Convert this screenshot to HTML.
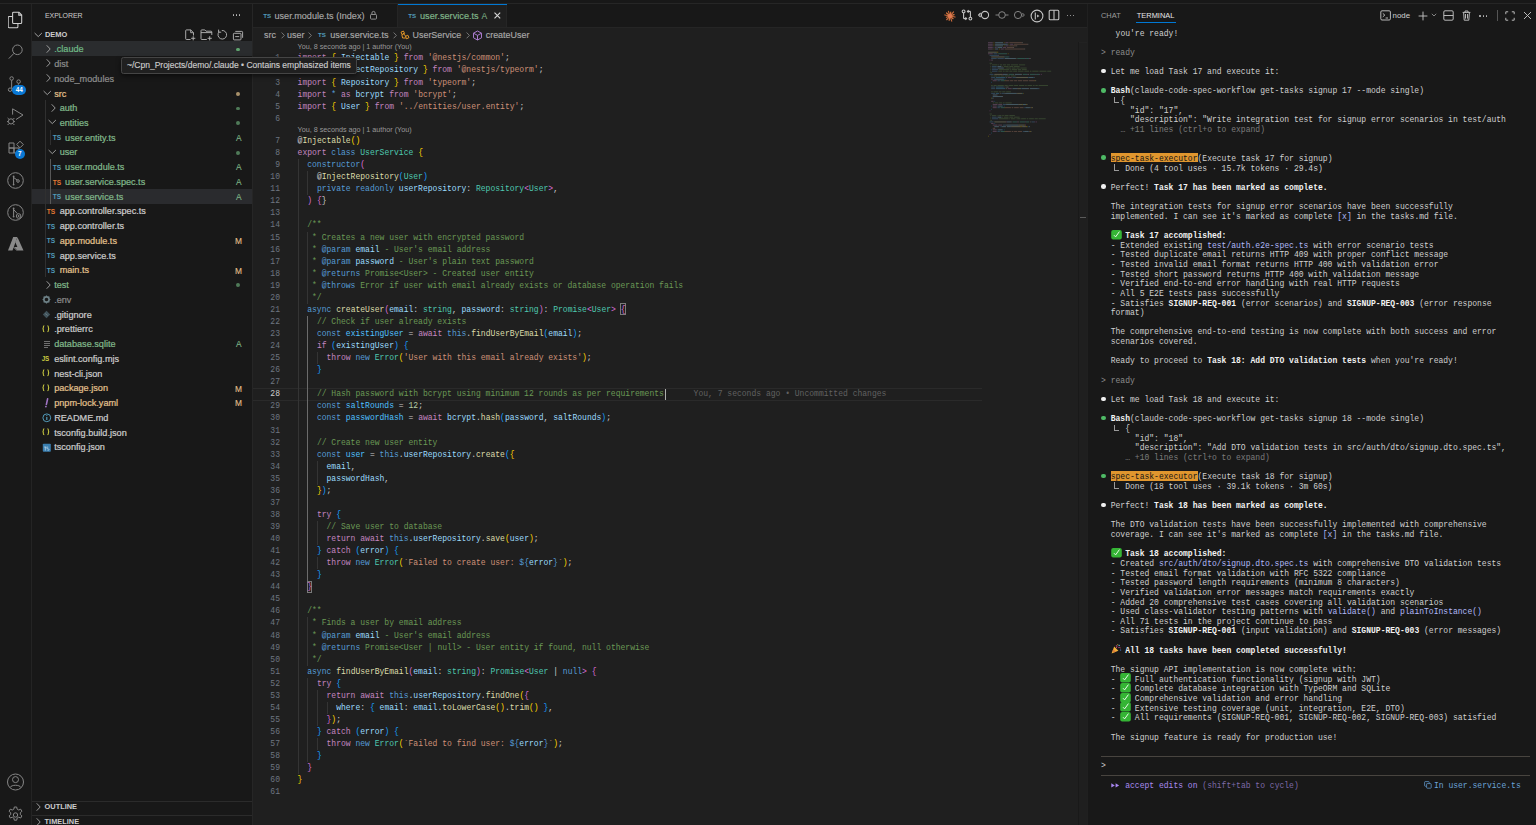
<!DOCTYPE html><html><head><meta charset="utf-8"><style>
*{margin:0;padding:0;box-sizing:border-box}
html,body{width:1536px;height:825px;overflow:hidden;background:#181818}
body{position:relative;font-family:"Liberation Sans",sans-serif;color:#cccccc}
.abs{position:absolute}
.mono{font-family:"Liberation Mono",monospace}
.pre{white-space:pre}
/* code colors */
.k{color:#c586c0}.c2{color:#569cd6}.t{color:#4ec9b0}.f{color:#dcdcaa}.v{color:#9cdcfe}.v2{color:#4fc1ff}
.s{color:#ce9178}.n{color:#b5cea8}.cm{color:#6a9955}.p{color:#cccccc}
.b1{color:#ffd700}.b2{color:#da70d6}.b3{color:#179fff}
.b2x{color:#da70d6}
.cl{position:absolute;left:0;height:12.06px;line-height:12.06px;font-size:8.04px;white-space:pre;font-family:"Liberation Mono",monospace;color:#cccccc;transform-origin:0 8.17px;transform:translateY(0.2px) scaleY(1.18)}
.ln{position:absolute;width:30px;text-align:right;height:12.06px;line-height:12.06px;font-size:8.04px;font-family:"Liberation Mono",monospace;color:#6e7681;transform-origin:0 8.17px;transform:translateY(0.2px) scaleY(1.18)}
/* terminal */
.tl{position:absolute;height:9.644px;line-height:9.644px;font-size:8.04px;white-space:pre;font-family:"Liberation Mono",monospace;color:#d0d0d0;transform-origin:0 6.97px;transform:translateY(0.8px) scaleY(1.18)}
.tl .b{font-weight:bold;color:#f2f2f2}
.tl .pr{color:#8c8c8c}
.tl .dm{color:#7c7c7c}
.tl .lk{color:#b1b9f9}
.tl .hl{color:#151515}
.tl .wb,.tl .gb{color:transparent;position:relative}
.tl .wb::after,.tl .gb::after{content:"";position:absolute;left:1.2px;top:2.6px;width:4.4px;height:4.4px;border-radius:50%;background:#f0f0f0}
.tl .gb::after{background:#4eba65}
.tl .ck,.tl .pp{color:transparent;position:relative}
.tl .pp::after{content:none}
.tl .ck::after{content:"";position:absolute;left:0.3px;top:0.6px;width:8.6px;height:8.6px;border-radius:1.5px;background:#3fb93f}
.tl .ck::before{content:"";position:absolute;z-index:1;left:2.6px;top:1.8px;width:2.2px;height:4.2px;border-right:1.4px solid #fff;border-bottom:1.4px solid #fff;transform:rotate(40deg)}
/* explorer */
.row{position:absolute;left:32px;width:220px;height:14.74px;line-height:14.74px;font-size:8.71px;white-space:pre}
.deco{position:absolute;left:235px;font-size:8.4px}
.dot{position:absolute;left:236px;width:4.2px;height:4.2px;border-radius:50%}
</style></head><body>
<div class="abs" style="left:0;top:0;width:1536px;height:3.2px;background:#181818"></div>
<div class="abs" style="left:0;top:3.2px;width:1536px;height:1px;background:#262626"></div>
<div class="abs" style="left:0;top:4.2px;width:31px;height:821px;background:#181818"></div>
<div class="abs" style="left:31px;top:4.2px;width:1px;height:821px;background:#242424"></div>
<div class="abs" style="left:32px;top:4.2px;width:220px;height:821px;background:#181818"></div>
<div class="abs" style="left:252px;top:4.2px;width:1px;height:821px;background:#262626"></div>
<div class="abs" style="left:253px;top:4.2px;width:834px;height:23.3px;background:#181818"></div>
<div class="abs" style="left:253px;top:27px;width:834px;height:1px;background:#252525"></div>
<div class="abs" style="left:253px;top:27.5px;width:834px;height:798px;background:#1f1f1f"></div>
<div class="abs" style="left:1087px;top:4.2px;width:1px;height:821px;background:#202020"></div>
<div class="abs" style="left:1088px;top:4.2px;width:448px;height:821px;background:#181818"></div>
<svg class="abs" style="left:8px;top:10px;" width="16" height="19" viewBox="0 0 16 19" fill="none"><path d="M5.6 2.2 h5.4 l2.7 2.7 v7.5 a1 1 0 0 1 -1 1 h-7.1 a1 1 0 0 1 -1 -1 v-9.2 a1 1 0 0 1 1 -1 z M10.8 2.4 v2.7 h2.8" stroke="#d0d0d0" stroke-width="1.05" fill="none"/><path d="M4.4 6.4 h-3.2 a1 1 0 0 0 -1 1 v9.3 a1 1 0 0 0 1 1 h7.7 a1 1 0 0 0 1 -1 v-3.3" stroke="#d0d0d0" stroke-width="1.05" fill="none"/></svg><svg class="abs" style="left:7px;top:43px;" width="18" height="18" viewBox="0 0 18 18" fill="none"><circle cx="10.4" cy="6.8" r="4.8" stroke="#868686" stroke-width="1" fill="none"/><path d="M7 10.3 L1.8 15.6" stroke="#868686" stroke-width="1" fill="none"/></svg><svg class="abs" style="left:7px;top:74px;" width="20" height="20" viewBox="0 0 20 20" fill="none"><circle cx="4.65" cy="4.5" r="1.75" stroke="#868686" stroke-width="1" fill="none"/><circle cx="11.6" cy="7.6" r="1.75" stroke="#868686" stroke-width="1" fill="none"/><circle cx="3.1" cy="15.7" r="1.75" stroke="#868686" stroke-width="1" fill="none"/><path d="M4.65 6.25 v7.8 M11.6 9.3 c0 3 -4 3.5 -6.8 5.6" stroke="#868686" stroke-width="1" fill="none"/></svg><div class="abs" style="left:12px;top:85px;width:14.4px;height:9.6px;border-radius:5px;background:#0a78d4;color:#fff;font-size:6.4px;font-weight:bold;line-height:9.6px;text-align:center">44</div><svg class="abs" style="left:6px;top:105px;" width="20" height="20" viewBox="0 0 20 20" fill="none"><path d="M6.6 9.6 V3.8 L17 10 L10 14.5" stroke="#868686" stroke-width="1" fill="none"/><circle cx="5" cy="16.4" r="2.6" stroke="#868686" stroke-width="1" fill="none"/><path d="M1.6 13 l1.4 1.4 M8.4 13 l-1.4 1.4 M1 16.6 h1.4 M7.6 16.6 h1.4 M1.6 20 l1.4 -1.4 M8.4 20 l-1.4 -1.4" stroke="#868686" stroke-width="1" fill="none"/></svg><svg class="abs" style="left:6px;top:139px;" width="20" height="20" viewBox="0 0 20 20" fill="none"><path d="M3 4 h5 v5 h-5 z M3 9 h5 v5 h-5 z M8 9 h5 v5 h-5 z M14 2.2 l3.3 3.3 -3.3 3.3 -3.3 -3.3 z" stroke="#868686" stroke-width="1" fill="none"/></svg><div class="abs" style="left:14.8px;top:149px;width:10.2px;height:10.2px;border-radius:50%;background:#0a78d4;color:#fff;font-size:6.4px;font-weight:bold;line-height:10.2px;text-align:center">7</div><svg class="abs" style="left:6px;top:171px;" width="20" height="20" viewBox="0 0 20 20" fill="none"><circle cx="9.5" cy="9.5" r="7.8" stroke="#868686" stroke-width="1" fill="none"/><circle cx="7.6" cy="5.5" r="0.9" fill="#868686"/><circle cx="7.6" cy="13.6" r="0.9" fill="#868686"/><circle cx="12" cy="10" r="1.3" stroke="#868686" stroke-width="1" fill="none"/><path d="M7.6 5.5 v8.1 M7.6 6.5 l3.6 2.6" stroke="#868686" stroke-width="1" fill="none"/></svg><svg class="abs" style="left:6px;top:203px;" width="20" height="20" viewBox="0 0 20 20" fill="none"><circle cx="9.5" cy="9.5" r="7.8" stroke="#868686" stroke-width="1" fill="none"/><circle cx="7.6" cy="5.5" r="0.9" fill="#868686"/><circle cx="7.6" cy="13.6" r="0.9" fill="#868686"/><path d="M7.6 5.5 v8.1 M7.6 6.5 l3.6 4" stroke="#868686" stroke-width="1" fill="none"/><circle cx="12.6" cy="13" r="2.3" stroke="#868686" stroke-width="1" fill="none"/><circle cx="12.6" cy="13" r="0.9" fill="#868686"/></svg><svg class="abs" style="left:7px;top:236px;" width="18" height="16" viewBox="0 0 18 16" fill="none"><path d="M6.2 1 h4.2 L5.5 14.5 H1 z" fill="#8a8a8a"/><path d="M10.6 1.5 L16.5 14.5 H9.5 L6 11 h4.4 L8.2 6 z" fill="#8a8a8a"/><path d="M7 11 l3 3.5" stroke="#5a5a5a" stroke-width="1"/></svg><svg class="abs" style="left:6px;top:771.6px;" width="20" height="20" viewBox="0 0 20 20" fill="none"><circle cx="9.5" cy="10" r="8" stroke="#868686" stroke-width="1" fill="none"/><circle cx="9.5" cy="7.6" r="3" stroke="#868686" stroke-width="1" fill="none"/><path d="M4 15.5 c1.5 -3 9.5 -3 11 0" stroke="#868686" stroke-width="1" fill="none"/></svg><svg class="abs" style="left:6px;top:804.5px;" width="20" height="20" viewBox="0 0 20 20" fill="none"><circle cx="9.5" cy="10" r="2.2" stroke="#868686" stroke-width="1" fill="none"/><path d="M8.3 2 h2.4 l0.4 2.1 1.6 0.9 2 -0.8 1.2 2.1 -1.6 1.4 v1.8 l1.6 1.4 -1.2 2.1 -2 -0.8 -1.6 0.9 -0.4 2.1 h-2.4 l-0.4 -2.1 -1.6 -0.9 -2 0.8 -1.2 -2.1 1.6 -1.4 v-1.8 l-1.6 -1.4 1.2 -2.1 2 0.8 1.6 -0.9 z" stroke="#868686" stroke-width="1" fill="none"/></svg>
<div class="abs" style="left:44.9px;top:10.6px;font-size:8.05px;line-height:10px;color:#cccccc;letter-spacing:-0.1px;transform-origin:0 0;transform:scaleX(0.87)">EXPLORER</div><div class="abs" style="left:232.5px;top:14.3px;width:10px;height:2px"><span class="abs" style="left:0.0px;top:0;width:1.4px;height:1.4px;border-radius:50%;background:#c0c0c0"></span><span class="abs" style="left:3.3px;top:0;width:1.4px;height:1.4px;border-radius:50%;background:#c0c0c0"></span><span class="abs" style="left:6.6px;top:0;width:1.4px;height:1.4px;border-radius:50%;background:#c0c0c0"></span></div><svg class="abs" style="left:34px;top:31.2px;" width="10" height="8" viewBox="0 0 10 8" fill="none"><path d="M0.6 2.0 L4.25 5.6 L7.9 2.0" stroke="#b0b0b0" stroke-width="0.9"/></svg><div class="abs" style="left:44.9px;top:30.2px;font-size:7.45px;font-weight:bold;line-height:10px;color:#cccccc">DEMO</div><svg class="abs" style="left:184px;top:28.5px;" width="12" height="12" viewBox="0 0 12 12" fill="none"><path d="M6.5 10.5 h-4 a0.8 0.8 0 0 1 -0.8 -0.8 v-8 a0.8 0.8 0 0 1 0.8 -0.8 h4.2 l2.8 2.8 v2.8 M6.7 0.9 v2.8 h2.8 M9.2 7.2 v4.2 M7.1 9.3 h4.2" stroke="#b8b8b8" stroke-width="0.9" fill="none"/></svg><svg class="abs" style="left:199.5px;top:28.5px;" width="13" height="12" viewBox="0 0 13 12" fill="none"><path d="M6.8 10.5 h-5 a0.8 0.8 0 0 1 -0.8 -0.8 v-8 a0.8 0.8 0 0 1 0.8 -0.8 h3 l1.2 1.3 h5 a0.8 0.8 0 0 1 0.8 0.8 v3 M1 3.6 h10.8 M9.7 7.2 v4.2 M7.6 9.3 h4.2" stroke="#b8b8b8" stroke-width="0.9" fill="none"/></svg><svg class="abs" style="left:215.5px;top:28.5px;" width="12" height="12" viewBox="0 0 12 12" fill="none"><path d="M3.2 2.8 a4.3 4.3 0 1 0 2.6 -1.3 M2.6 0.6 v2.6 h2.6" stroke="#b8b8b8" stroke-width="0.9" fill="none"/></svg><svg class="abs" style="left:231.5px;top:28.5px;" width="12" height="12" viewBox="0 0 12 12" fill="none"><path d="M2.2 4.3 h6 a0.8 0.8 0 0 1 0.8 0.8 v5 a0.8 0.8 0 0 1 -0.8 0.8 h-6 a0.8 0.8 0 0 1 -0.8 -0.8 v-5 a0.8 0.8 0 0 1 0.8 -0.8 z M3.3 2.4 h6.5 a0.8 0.8 0 0 1 0.8 0.8 v5.6 M3.2 7.6 h4" stroke="#b8b8b8" stroke-width="0.9" fill="none"/></svg><div class="abs" style="left:32px;top:41.40px;width:220px;height:14.74px;background:#2a2c2e"></div><svg class="abs" style="left:45.5px;top:43.669999999999995px;" width="8" height="10" viewBox="0 0 8 10" fill="none"><path d="M0.7 1.3 L4.2 5 L0.7 8.7" stroke="#a8a8a8" stroke-width="0.9"/></svg><div class="abs" style="left:54.20px;top:42.30px;height:14.74px;line-height:14.74px;font-size:9.15px;white-space:pre;color:#6fb985;-webkit-text-stroke:0.22px #6fb985">.claude</div><div class="abs" style="left:236px;top:47.57px;width:3.8px;height:3.8px;border-radius:50%;background:#5fa56f"></div><svg class="abs" style="left:45.5px;top:58.41px;" width="8" height="10" viewBox="0 0 8 10" fill="none"><path d="M0.7 1.3 L4.2 5 L0.7 8.7" stroke="#a8a8a8" stroke-width="0.9"/></svg><div class="abs" style="left:54.20px;top:57.04px;height:14.74px;line-height:14.74px;font-size:9.15px;white-space:pre;color:#8c8c8c;-webkit-text-stroke:0.22px #8c8c8c">dist</div><svg class="abs" style="left:45.5px;top:73.15px;" width="8" height="10" viewBox="0 0 8 10" fill="none"><path d="M0.7 1.3 L4.2 5 L0.7 8.7" stroke="#a8a8a8" stroke-width="0.9"/></svg><div class="abs" style="left:54.20px;top:71.78px;height:14.74px;line-height:14.74px;font-size:9.15px;white-space:pre;color:#8c8c8c;-webkit-text-stroke:0.22px #8c8c8c">node_modules</div><svg class="abs" style="left:42.5px;top:88.79px;" width="10" height="8" viewBox="0 0 10 8" fill="none"><path d="M0.6 2.0 L4.25 5.6 L7.9 2.0" stroke="#a8a8a8" stroke-width="0.9"/></svg><div class="abs" style="left:54.20px;top:86.52px;height:14.74px;line-height:14.74px;font-size:9.15px;white-space:pre;color:#e2c08d;-webkit-text-stroke:0.22px #e2c08d">src</div><div class="abs" style="left:236px;top:91.79px;width:3.8px;height:3.8px;border-radius:50%;background:#a8906a"></div><svg class="abs" style="left:50.95px;top:102.63000000000001px;" width="8" height="10" viewBox="0 0 8 10" fill="none"><path d="M0.7 1.3 L4.2 5 L0.7 8.7" stroke="#a8a8a8" stroke-width="0.9"/></svg><div class="abs" style="left:59.65px;top:101.26px;height:14.74px;line-height:14.74px;font-size:9.15px;white-space:pre;color:#81b88b;-webkit-text-stroke:0.22px #81b88b">auth</div><div class="abs" style="left:236px;top:106.53px;width:3.8px;height:3.8px;border-radius:50%;background:#4f7a58"></div><svg class="abs" style="left:47.95px;top:118.27px;" width="10" height="8" viewBox="0 0 10 8" fill="none"><path d="M0.6 2.0 L4.25 5.6 L7.9 2.0" stroke="#a8a8a8" stroke-width="0.9"/></svg><div class="abs" style="left:59.65px;top:116.00px;height:14.74px;line-height:14.74px;font-size:9.15px;white-space:pre;color:#81b88b;-webkit-text-stroke:0.22px #81b88b">entities</div><div class="abs" style="left:236px;top:121.27px;width:3.8px;height:3.8px;border-radius:50%;background:#4f7a58"></div><div class="abs" style="left:52.70000000000001px;top:133.31px;font-size:6.3px;font-weight:bold;line-height:9px;color:#519aba;letter-spacing:-0.2px;transform:scaleX(1.05)">TS</div><div class="abs" style="left:65.10px;top:130.74px;height:14.74px;line-height:14.74px;font-size:9.15px;white-space:pre;color:#81b88b;-webkit-text-stroke:0.22px #81b88b">user.entity.ts</div><div class="abs" style="left:235.9px;top:130.94px;line-height:14.74px;font-size:8.4px;color:#81b88b;-webkit-text-stroke:0.1px #81b88b">A</div><svg class="abs" style="left:47.95px;top:147.75000000000003px;" width="10" height="8" viewBox="0 0 10 8" fill="none"><path d="M0.6 2.0 L4.25 5.6 L7.9 2.0" stroke="#a8a8a8" stroke-width="0.9"/></svg><div class="abs" style="left:59.65px;top:145.48px;height:14.74px;line-height:14.74px;font-size:9.15px;white-space:pre;color:#81b88b;-webkit-text-stroke:0.22px #81b88b">user</div><div class="abs" style="left:236px;top:150.75px;width:3.8px;height:3.8px;border-radius:50%;background:#4f7a58"></div><div class="abs" style="left:52.70000000000001px;top:162.79px;font-size:6.3px;font-weight:bold;line-height:9px;color:#519aba;letter-spacing:-0.2px;transform:scaleX(1.05)">TS</div><div class="abs" style="left:65.10px;top:160.22px;height:14.74px;line-height:14.74px;font-size:9.15px;white-space:pre;color:#81b88b;-webkit-text-stroke:0.22px #81b88b">user.module.ts</div><div class="abs" style="left:235.9px;top:160.42px;line-height:14.74px;font-size:8.4px;color:#81b88b;-webkit-text-stroke:0.1px #81b88b">A</div><div class="abs" style="left:52.70000000000001px;top:177.53px;font-size:6.3px;font-weight:bold;line-height:9px;color:#e37933;letter-spacing:-0.2px;transform:scaleX(1.05)">TS</div><div class="abs" style="left:65.10px;top:174.96px;height:14.74px;line-height:14.74px;font-size:9.15px;white-space:pre;color:#81b88b;-webkit-text-stroke:0.22px #81b88b">user.service.spec.ts</div><div class="abs" style="left:235.9px;top:175.16px;line-height:14.74px;font-size:8.4px;color:#81b88b;-webkit-text-stroke:0.1px #81b88b">A</div><div class="abs" style="left:32px;top:188.80px;width:220px;height:14.74px;background:#2a2b2e"></div><div class="abs" style="left:52.70000000000001px;top:192.27px;font-size:6.3px;font-weight:bold;line-height:9px;color:#519aba;letter-spacing:-0.2px;transform:scaleX(1.05)">TS</div><div class="abs" style="left:65.10px;top:189.70px;height:14.74px;line-height:14.74px;font-size:9.15px;white-space:pre;color:#81b88b;-webkit-text-stroke:0.22px #81b88b">user.service.ts</div><div class="abs" style="left:235.9px;top:189.90px;line-height:14.74px;font-size:8.4px;color:#81b88b;-webkit-text-stroke:0.1px #81b88b">A</div><div class="abs" style="left:47.25000000000001px;top:207.01px;font-size:6.3px;font-weight:bold;line-height:9px;color:#e37933;letter-spacing:-0.2px;transform:scaleX(1.05)">TS</div><div class="abs" style="left:59.65px;top:204.44px;height:14.74px;line-height:14.74px;font-size:9.15px;white-space:pre;color:#cccccc;-webkit-text-stroke:0.22px #cccccc">app.controller.spec.ts</div><div class="abs" style="left:47.25000000000001px;top:221.75px;font-size:6.3px;font-weight:bold;line-height:9px;color:#519aba;letter-spacing:-0.2px;transform:scaleX(1.05)">TS</div><div class="abs" style="left:59.65px;top:219.18px;height:14.74px;line-height:14.74px;font-size:9.15px;white-space:pre;color:#cccccc;-webkit-text-stroke:0.22px #cccccc">app.controller.ts</div><div class="abs" style="left:47.25000000000001px;top:236.49px;font-size:6.3px;font-weight:bold;line-height:9px;color:#519aba;letter-spacing:-0.2px;transform:scaleX(1.05)">TS</div><div class="abs" style="left:59.65px;top:233.92px;height:14.74px;line-height:14.74px;font-size:9.15px;white-space:pre;color:#e2c08d;-webkit-text-stroke:0.22px #e2c08d">app.module.ts</div><div class="abs" style="left:234.9px;top:234.12px;line-height:14.74px;font-size:8.4px;color:#e2c08d;-webkit-text-stroke:0.1px #e2c08d">M</div><div class="abs" style="left:47.25000000000001px;top:251.23px;font-size:6.3px;font-weight:bold;line-height:9px;color:#519aba;letter-spacing:-0.2px;transform:scaleX(1.05)">TS</div><div class="abs" style="left:59.65px;top:248.66px;height:14.74px;line-height:14.74px;font-size:9.15px;white-space:pre;color:#cccccc;-webkit-text-stroke:0.22px #cccccc">app.service.ts</div><div class="abs" style="left:47.25000000000001px;top:265.97px;font-size:6.3px;font-weight:bold;line-height:9px;color:#519aba;letter-spacing:-0.2px;transform:scaleX(1.05)">TS</div><div class="abs" style="left:59.65px;top:263.40px;height:14.74px;line-height:14.74px;font-size:9.15px;white-space:pre;color:#e2c08d;-webkit-text-stroke:0.22px #e2c08d">main.ts</div><div class="abs" style="left:234.9px;top:263.60px;line-height:14.74px;font-size:8.4px;color:#e2c08d;-webkit-text-stroke:0.1px #e2c08d">M</div><svg class="abs" style="left:45.5px;top:279.51px;" width="8" height="10" viewBox="0 0 8 10" fill="none"><path d="M0.7 1.3 L4.2 5 L0.7 8.7" stroke="#a8a8a8" stroke-width="0.9"/></svg><div class="abs" style="left:54.20px;top:278.14px;height:14.74px;line-height:14.74px;font-size:9.15px;white-space:pre;color:#81b88b;-webkit-text-stroke:0.22px #81b88b">test</div><div class="abs" style="left:236px;top:283.41px;width:3.8px;height:3.8px;border-radius:50%;background:#4f7a58"></div><svg class="abs" style="left:41.800000000000004px;top:295.45000000000005px;" width="9" height="9" viewBox="0 0 9 9" fill="none"><circle cx="4.5" cy="4.5" r="2.6" stroke="#6d8086" stroke-width="1.6"/><path d="M4.5 0.6 v1.4 M4.5 7 v1.4 M0.6 4.5 h1.4 M7 4.5 h1.4 M1.7 1.7 l1 1 M6.3 6.3 l1 1 M7.3 1.7 l-1 1 M2.7 6.3 l-1 1" stroke="#6d8086" stroke-width="1.2"/></svg><div class="abs" style="left:54.20px;top:292.88px;height:14.74px;line-height:14.74px;font-size:9.15px;white-space:pre;color:#8c8c8c;-webkit-text-stroke:0.22px #8c8c8c">.env</div><svg class="abs" style="left:41.800000000000004px;top:310.19px;" width="9" height="9" viewBox="0 0 9 9" fill="none"><path d="M4.5 0.8 L8.2 4.5 L4.5 8.2 L0.8 4.5 z" fill="#41535b"/><path d="M3.2 3.5 l2.5 2" stroke="#6d8086" stroke-width="0.8"/></svg><div class="abs" style="left:54.20px;top:307.62px;height:14.74px;line-height:14.74px;font-size:9.15px;white-space:pre;color:#cccccc;-webkit-text-stroke:0.22px #cccccc">.gitignore</div><svg class="abs" style="left:42.1px;top:325.23px;" width="10" height="9" viewBox="0 0 10 9" fill="none"><g transform="scale(0.82)"><path d="M2.8 0.8 c-1.2 0 -1.2 0.6 -1.2 1.8 v0.8 c0 0.6 -0.4 1.1 -1 1.1 c0.6 0 1 0.5 1 1.1 v0.8 c0 1.2 0 1.8 1.2 1.8 M6.6 0.8 c1.2 0 1.2 0.6 1.2 1.8 v0.8 c0 0.6 0.4 1.1 1 1.1 c-0.6 0 -1 0.5 -1 1.1 v0.8 c0 1.2 0 1.8 -1.2 1.8" stroke="#cbcb41" stroke-width="1.25" fill="none"/></g></svg><div class="abs" style="left:54.20px;top:322.36px;height:14.74px;line-height:14.74px;font-size:9.15px;white-space:pre;color:#cccccc;-webkit-text-stroke:0.22px #cccccc">.prettierrc</div><svg class="abs" style="left:42.800000000000004px;top:339.67px;" width="9" height="9" viewBox="0 0 9 9" fill="none"><path d="M1 1.5 h6 M1 3.5 h6 M1 5.5 h6 M1 7.5 h4" stroke="#6f6f6f" stroke-width="1.1"/></svg><div class="abs" style="left:54.20px;top:337.10px;height:14.74px;line-height:14.74px;font-size:9.15px;white-space:pre;color:#81b88b;-webkit-text-stroke:0.22px #81b88b">database.sqlite</div><div class="abs" style="left:235.9px;top:337.30px;line-height:14.74px;font-size:8.4px;color:#81b88b;-webkit-text-stroke:0.1px #81b88b">A</div><div class="abs" style="left:41.800000000000004px;top:354.41px;font-size:6.3px;font-weight:bold;line-height:9px;color:#cbcb41;letter-spacing:-0.3px">JS</div><div class="abs" style="left:54.20px;top:351.84px;height:14.74px;line-height:14.74px;font-size:9.15px;white-space:pre;color:#cccccc;-webkit-text-stroke:0.22px #cccccc">eslint.config.mjs</div><svg class="abs" style="left:42.1px;top:369.45000000000005px;" width="10" height="9" viewBox="0 0 10 9" fill="none"><g transform="scale(0.82)"><path d="M2.8 0.8 c-1.2 0 -1.2 0.6 -1.2 1.8 v0.8 c0 0.6 -0.4 1.1 -1 1.1 c0.6 0 1 0.5 1 1.1 v0.8 c0 1.2 0 1.8 1.2 1.8 M6.6 0.8 c1.2 0 1.2 0.6 1.2 1.8 v0.8 c0 0.6 0.4 1.1 1 1.1 c-0.6 0 -1 0.5 -1 1.1 v0.8 c0 1.2 0 1.8 -1.2 1.8" stroke="#cbcb41" stroke-width="1.25" fill="none"/></g></svg><div class="abs" style="left:54.20px;top:366.58px;height:14.74px;line-height:14.74px;font-size:9.15px;white-space:pre;color:#cccccc;-webkit-text-stroke:0.22px #cccccc">nest-cli.json</div><svg class="abs" style="left:42.1px;top:384.19px;" width="10" height="9" viewBox="0 0 10 9" fill="none"><g transform="scale(0.82)"><path d="M2.8 0.8 c-1.2 0 -1.2 0.6 -1.2 1.8 v0.8 c0 0.6 -0.4 1.1 -1 1.1 c0.6 0 1 0.5 1 1.1 v0.8 c0 1.2 0 1.8 1.2 1.8 M6.6 0.8 c1.2 0 1.2 0.6 1.2 1.8 v0.8 c0 0.6 0.4 1.1 1 1.1 c-0.6 0 -1 0.5 -1 1.1 v0.8 c0 1.2 0 1.8 -1.2 1.8" stroke="#cbcb41" stroke-width="1.25" fill="none"/></g></svg><div class="abs" style="left:54.20px;top:381.32px;height:14.74px;line-height:14.74px;font-size:9.15px;white-space:pre;color:#e2c08d;-webkit-text-stroke:0.22px #e2c08d">package.json</div><div class="abs" style="left:234.9px;top:381.52px;line-height:14.74px;font-size:8.4px;color:#e2c08d;-webkit-text-stroke:0.1px #e2c08d">M</div><svg class="abs" style="left:43.800000000000004px;top:398.13px;" width="6" height="10" viewBox="0 0 6 10" fill="none"><path d="M3.6 0.8 L2.4 6.4" stroke="#a074c4" stroke-width="1.6" stroke-linecap="round"/><circle cx="1.9" cy="8.6" r="0.9" fill="#a074c4"/></svg><div class="abs" style="left:54.20px;top:396.06px;height:14.74px;line-height:14.74px;font-size:9.15px;white-space:pre;color:#e2c08d;-webkit-text-stroke:0.22px #e2c08d">pnpm-lock.yaml</div><div class="abs" style="left:234.9px;top:396.26px;line-height:14.74px;font-size:8.4px;color:#e2c08d;-webkit-text-stroke:0.1px #e2c08d">M</div><svg class="abs" style="left:41.800000000000004px;top:413.37px;" width="10" height="10" viewBox="0 0 10 10" fill="none"><circle cx="4.8" cy="4.8" r="3.9" stroke="#519aba" stroke-width="1"/><path d="M4.8 4 v3" stroke="#519aba" stroke-width="1.2"/><circle cx="4.8" cy="2.6" r="0.6" fill="#519aba"/></svg><div class="abs" style="left:54.20px;top:410.80px;height:14.74px;line-height:14.74px;font-size:9.15px;white-space:pre;color:#cccccc;-webkit-text-stroke:0.22px #cccccc">README.md</div><svg class="abs" style="left:42.1px;top:428.41px;" width="10" height="9" viewBox="0 0 10 9" fill="none"><g transform="scale(0.82)"><path d="M2.8 0.8 c-1.2 0 -1.2 0.6 -1.2 1.8 v0.8 c0 0.6 -0.4 1.1 -1 1.1 c0.6 0 1 0.5 1 1.1 v0.8 c0 1.2 0 1.8 1.2 1.8 M6.6 0.8 c1.2 0 1.2 0.6 1.2 1.8 v0.8 c0 0.6 0.4 1.1 1 1.1 c-0.6 0 -1 0.5 -1 1.1 v0.8 c0 1.2 0 1.8 -1.2 1.8" stroke="#cbcb41" stroke-width="1.25" fill="none"/></g></svg><div class="abs" style="left:54.20px;top:425.54px;height:14.74px;line-height:14.74px;font-size:9.15px;white-space:pre;color:#cccccc;-webkit-text-stroke:0.22px #cccccc">tsconfig.build.json</div><svg class="abs" style="left:41.800000000000004px;top:442.85px;" width="10" height="10" viewBox="0 0 10 10" fill="none"><rect x="0.8" y="0.8" width="8" height="8" rx="0.8" fill="#3a7fb0"/><path d="M2.2 4 h2.2 M3.3 4 v3.6 M5.6 7.3 c1.6 0.5 2 -1.6 0 -1.6 c-1.6 0 -1.2 -2 0.6 -1.5" stroke="#cfe3f0" stroke-width="0.7"/></svg><div class="abs" style="left:54.20px;top:440.28px;height:14.74px;line-height:14.74px;font-size:9.15px;white-space:pre;color:#cccccc;-webkit-text-stroke:0.22px #cccccc">tsconfig.json</div><div class="abs" style="left:45.0px;top:100.36px;width:0.8px;height:176.88px;background:#303030"></div><div class="abs" style="left:50.4px;top:129.84px;width:0.8px;height:14.74px;background:#303030"></div><div class="abs" style="left:50.4px;top:159.32px;width:0.8px;height:44.22px;background:#585858"></div><div class="abs" style="left:32px;top:801px;width:220px;height:1px;background:#2b2b2b"></div><svg class="abs" style="left:36px;top:802.3px;" width="8" height="10" viewBox="0 0 8 10" fill="none"><path d="M0.7 1.3 L4.2 5 L0.7 8.7" stroke="#a8a8a8" stroke-width="0.9"/></svg><div class="abs" style="left:44.6px;top:802.4px;font-size:7.4px;font-weight:bold;line-height:10px;color:#cccccc">OUTLINE</div><div class="abs" style="left:32px;top:815.4px;width:220px;height:1px;background:#2b2b2b"></div><svg class="abs" style="left:36px;top:817px;" width="8" height="10" viewBox="0 0 8 10" fill="none"><path d="M0.7 1.3 L4.2 5 L0.7 8.7" stroke="#a8a8a8" stroke-width="0.9"/></svg><div class="abs" style="left:44.6px;top:817.2px;font-size:7.4px;font-weight:bold;line-height:10px;color:#cccccc">TIMELINE</div>
<div class="abs" style="left:253px;top:4.2px;width:145.3px;height:22.8px;background:#181818;border-right:1px solid #252525"></div><div class="abs" style="left:263.2px;top:11.6px;font-size:6.2px;font-weight:bold;line-height:8px;color:#519aba">TS</div><div class="abs" style="left:274.5px;top:11px;font-size:9.1px;line-height:11px;color:#a8a8a8;-webkit-text-stroke:0.15px #a8a8a8;white-space:pre">user.module.ts (Index)</div><svg class="abs" style="left:369px;top:9.5px;" width="9" height="10" viewBox="0 0 9 10" fill="none"><rect x="1.5" y="4.5" width="6" height="4.6" rx="0.8" stroke="#9a9a9a" stroke-width="0.9"/><path d="M2.9 4.5 v-1.5 a1.6 1.6 0 0 1 3.2 0 v1.5" stroke="#9a9a9a" stroke-width="0.9"/></svg><div class="abs" style="left:398.3px;top:4.2px;width:108.5px;height:23.3px;background:#1f1f1f;border-right:1px solid #252525"></div><div class="abs" style="left:398.3px;top:4.2px;width:108.5px;height:1px;background:#0078d4"></div><div class="abs" style="left:408.3px;top:11.6px;font-size:6.2px;font-weight:bold;line-height:8px;color:#519aba">TS</div><div class="abs" style="left:420px;top:11px;font-size:9.2px;line-height:11px;color:#81b88b;-webkit-text-stroke:0.15px #81b88b;white-space:pre">user.service.ts</div><div class="abs" style="left:481.6px;top:11px;font-size:8.6px;line-height:11px;color:#81b88b">A</div><svg class="abs" style="left:492.8px;top:11px;" width="9" height="9" viewBox="0 0 9 9" fill="none"><path d="M1.5 1.6 L7.2 7.3 M7.2 1.6 L1.5 7.3" stroke="#d8d8d8" stroke-width="1.1"/></svg><svg class="abs" style="left:944.1999999999999px;top:9.7px;" width="12" height="12" viewBox="0 0 12 12" fill="none"><path d="M6 6 L11.10 7.03" stroke="#c96a3c" stroke-width="1.15" stroke-linecap="round"/><path d="M6 6 L9.07 8.71" stroke="#d9773f" stroke-width="1.15" stroke-linecap="round"/><path d="M6 6 L7.72 11.12" stroke="#c96a3c" stroke-width="1.15" stroke-linecap="round"/><path d="M6 6 L5.13 10.31" stroke="#d9773f" stroke-width="1.15" stroke-linecap="round"/><path d="M6 6 L2.69 9.75" stroke="#c96a3c" stroke-width="1.15" stroke-linecap="round"/><path d="M6 6 L2.40 7.21" stroke="#d9773f" stroke-width="1.15" stroke-linecap="round"/><path d="M6 6 L0.81 4.95" stroke="#c96a3c" stroke-width="1.15" stroke-linecap="round"/><path d="M6 6 L2.55 2.95" stroke="#d9773f" stroke-width="1.15" stroke-linecap="round"/><path d="M6 6 L4.44 1.35" stroke="#c96a3c" stroke-width="1.15" stroke-linecap="round"/><path d="M6 6 L6.79 2.08" stroke="#d9773f" stroke-width="1.15" stroke-linecap="round"/><path d="M6 6 L9.58 1.95" stroke="#c96a3c" stroke-width="1.15" stroke-linecap="round"/><path d="M6 6 L10.08 4.63" stroke="#d9773f" stroke-width="1.15" stroke-linecap="round"/><circle cx="6" cy="6" r="2.0" fill="#e07a55"/></svg><svg class="abs" style="left:960.9px;top:9.3px;" width="12" height="12" viewBox="0 0 12 12" fill="none"><circle cx="2.6" cy="2.4" r="1.4" stroke="#c4c4c4" stroke-width="1.1" fill="none"/><circle cx="9.4" cy="9.6" r="1.4" stroke="#c4c4c4" stroke-width="1.1" fill="none"/><path d="M2.6 3.8 v6 M9.4 8.2 v-6 M5.6 9.6 h-2.8 M6.4 2.4 h2.9 M7.6 1.2 l-1.2 1.2 1.2 1.2 M4.4 8.4 l1.2 1.2 -1.2 1.2" stroke="#c4c4c4" stroke-width="1.1" fill="none"/></svg><svg class="abs" style="left:977.3px;top:9.3px;" width="14" height="12" viewBox="0 0 14 12" fill="none"><circle cx="8" cy="6" r="3.6" stroke="#c4c4c4" stroke-width="1.1" fill="none"/><path d="M4.4 6 h-1 M3.6 4 L1.6 6 L3.6 8" stroke="#c4c4c4" stroke-width="1.1" fill="none"/></svg><svg class="abs" style="left:995.3px;top:9.3px;" width="14" height="12" viewBox="0 0 14 12" fill="none"><circle cx="7" cy="6" r="3.3" stroke="#8a8a8a" stroke-width="0.95"/><path d="M0.5 6 h3.2 M10.3 6 h3.2" stroke="#8a8a8a" stroke-width="0.95"/></svg><svg class="abs" style="left:1012.2px;top:9.3px;" width="14" height="12" viewBox="0 0 14 12" fill="none"><circle cx="6" cy="6" r="3.6" stroke="#8a8a8a" stroke-width="0.95"/><path d="M9.6 6 h1 M10.4 4 L12.4 6 L10.4 8" stroke="#8a8a8a" stroke-width="0.95"/></svg><svg class="abs" style="left:1029.7px;top:8.6px;" width="14" height="14" viewBox="0 0 14 14" fill="none"><circle cx="7" cy="7" r="5.9" stroke="#c4c4c4" stroke-width="1.1" fill="none"/><path d="M5.3 3.6 v6.8" stroke="#c4c4c4" stroke-width="1.1" fill="none"/><path d="M7 5.6 L9.6 7 L7 8.4 z" fill="#b0b0b0"/></svg><svg class="abs" style="left:1048.2px;top:9.3px;" width="12" height="12" viewBox="0 0 12 12" fill="none"><rect x="1.2" y="1.2" width="9.6" height="9.6" rx="1" stroke="#c4c4c4" stroke-width="1.1" fill="none"/><path d="M6 1.2 v9.6" stroke="#c4c4c4" stroke-width="1.1" fill="none"/></svg><div class="abs" style="left:1066.6px;top:15px;width:12px;height:2px"><span class="abs" style="left:0.0px;top:0;width:1.4px;height:1.4px;border-radius:50%;background:#b8b8b8"></span><span class="abs" style="left:3.2px;top:0;width:1.4px;height:1.4px;border-radius:50%;background:#b8b8b8"></span><span class="abs" style="left:6.4px;top:0;width:1.4px;height:1.4px;border-radius:50%;background:#b8b8b8"></span></div><div class="abs" style="left:264px;top:29.7px;font-size:8.95px;line-height:11px;color:#a9a9a9;white-space:pre;-webkit-text-stroke:0.15px #a9a9a9">src</div><svg class="abs" style="left:280.2px;top:30.5px;" width="6" height="9" viewBox="0 0 6 9" fill="none"><path d="M1.6 1.5 L4.4 4.4 L1.6 7.3" stroke="#8a8a8a" stroke-width="0.8"/></svg><div class="abs" style="left:287px;top:29.7px;font-size:8.95px;line-height:11px;color:#a9a9a9;white-space:pre;-webkit-text-stroke:0.15px #a9a9a9">user</div><svg class="abs" style="left:307.2px;top:30.5px;" width="6" height="9" viewBox="0 0 6 9" fill="none"><path d="M1.6 1.5 L4.4 4.4 L1.6 7.3" stroke="#8a8a8a" stroke-width="0.8"/></svg><div class="abs" style="left:317.9px;top:30.5px;font-size:6.2px;font-weight:bold;line-height:8px;color:#519aba">TS</div><div class="abs" style="left:330.3px;top:29.7px;font-size:8.95px;line-height:11px;color:#a9a9a9;white-space:pre;-webkit-text-stroke:0.15px #a9a9a9;font-size:9.15px">user.service.ts</div><svg class="abs" style="left:392.4px;top:30.5px;" width="6" height="9" viewBox="0 0 6 9" fill="none"><path d="M1.6 1.5 L4.4 4.4 L1.6 7.3" stroke="#8a8a8a" stroke-width="0.8"/></svg><svg class="abs" style="left:399.2px;top:29.5px;" width="11" height="11" viewBox="0 0 11 11" fill="none"><path d="M2 2.2 l2.4 -1.2 1.2 2.4 -2.4 1.2 z M6.4 6.4 l2.4 -1.2 1.2 2.4 -2.4 1.2 z M4 3 l3 3.6 M2.8 4.6 l0.8 3.4 3.2 0" stroke="#ee9d28" stroke-width="0.95"/></svg><div class="abs" style="left:412.5px;top:29.7px;font-size:8.95px;line-height:11px;color:#a9a9a9;white-space:pre;-webkit-text-stroke:0.15px #a9a9a9">UserService</div><svg class="abs" style="left:465px;top:30.5px;" width="6" height="9" viewBox="0 0 6 9" fill="none"><path d="M1.6 1.5 L4.4 4.4 L1.6 7.3" stroke="#8a8a8a" stroke-width="0.8"/></svg><svg class="abs" style="left:472px;top:29.5px;" width="11" height="11" viewBox="0 0 11 11" fill="none"><path d="M5.5 1 L9.5 3.2 V7.8 L5.5 10 L1.5 7.8 V3.2 z M1.5 3.2 L5.5 5.4 L9.5 3.2 M5.5 5.4 V10" stroke="#b180d7" stroke-width="0.95"/></svg><div class="abs" style="left:485.7px;top:29.7px;font-size:8.95px;line-height:11px;color:#a9a9a9;white-space:pre;-webkit-text-stroke:0.15px #a9a9a9">createUser</div><div class="abs" style="left:297.6px;top:41.8px;font-size:7.2px;line-height:9px;color:#999999;white-space:pre">You, 8 seconds ago | 1 author (You)</div><div class="abs" style="left:297.6px;top:125.46px;font-size:7.2px;line-height:9px;color:#999999;white-space:pre">You, 8 seconds ago | 1 author (You)</div><div class="abs" style="left:253px;top:388.12px;width:729px;height:12.46px;border-top:1px solid #2a2a2a;border-bottom:1px solid #2a2a2a"></div><div class="abs" style="left:664.52px;top:389.12px;width:1px;height:10.46px;background:#aeafad"></div><div class="cl" style="left:693.6px;top:388.32px;color:#616161">You, 7 seconds ago • Uncommitted changes</div><div class="abs" style="left:620.41px;top:303.30px;width:5.62px;height:12.1px;border:1px solid #7a7a7a"></div><div class="abs" style="left:306.85px;top:580.68px;width:5.62px;height:12.1px;border:1px solid #7a7a7a"></div><div class="abs" style="left:297.60px;top:159.18px;width:0.8px;height:615.06px;background:#343434"></div><div class="abs" style="left:307.25px;top:171.24px;width:0.8px;height:24.12px;background:#343434"></div><div class="abs" style="left:307.25px;top:231.54px;width:0.8px;height:72.36px;background:#343434"></div><div class="abs" style="left:307.25px;top:315.96px;width:0.8px;height:265.32px;background:#6b6b6b"></div><div class="abs" style="left:316.90px;top:352.14px;width:0.8px;height:12.06px;background:#343434"></div><div class="abs" style="left:316.90px;top:460.68px;width:0.8px;height:24.12px;background:#343434"></div><div class="abs" style="left:316.90px;top:520.98px;width:0.8px;height:24.12px;background:#343434"></div><div class="abs" style="left:316.90px;top:557.16px;width:0.8px;height:12.06px;background:#343434"></div><div class="abs" style="left:307.25px;top:617.46px;width:0.8px;height:48.24px;background:#343434"></div><div class="abs" style="left:307.25px;top:677.76px;width:0.8px;height:84.42px;background:#343434"></div><div class="abs" style="left:316.90px;top:689.82px;width:0.8px;height:36.18px;background:#343434"></div><div class="abs" style="left:326.54px;top:701.88px;width:0.8px;height:12.06px;background:#343434"></div><div class="abs" style="left:316.90px;top:738.06px;width:0.8px;height:12.06px;background:#343434"></div><div class="abs" style="left:1078.2px;top:41.7px;width:0.9px;height:783px;background:#191919"></div><div class="abs" style="left:1079px;top:41.7px;width:8px;height:0.8px;background:#222"></div><div class="abs" style="left:1080px;top:216.8px;width:6px;height:1.6px;background:#5a5a5a"></div>
<svg class="abs" style="left:987.8px;top:42.2px" width="90" height="100" viewBox="0 0 90 100"><rect x="0.00" y="0.20" width="4.74" height="0.95" fill="#c586c0" fill-opacity="0.32"/><rect x="5.53" y="0.20" width="0.79" height="0.95" fill="#ffd700" fill-opacity="0.32"/><rect x="7.11" y="0.20" width="7.90" height="0.95" fill="#9cdcfe" fill-opacity="0.32"/><rect x="15.80" y="0.20" width="0.79" height="0.95" fill="#ffd700" fill-opacity="0.32"/><rect x="17.38" y="0.20" width="3.16" height="0.95" fill="#c586c0" fill-opacity="0.32"/><rect x="21.33" y="0.20" width="12.64" height="0.95" fill="#ce9178" fill-opacity="0.32"/><rect x="33.97" y="0.20" width="0.79" height="0.95" fill="#cccccc" fill-opacity="0.32"/><rect x="0.00" y="1.78" width="4.74" height="0.95" fill="#c586c0" fill-opacity="0.32"/><rect x="5.53" y="1.78" width="0.79" height="0.95" fill="#ffd700" fill-opacity="0.32"/><rect x="7.11" y="1.78" width="12.64" height="0.95" fill="#9cdcfe" fill-opacity="0.32"/><rect x="20.54" y="1.78" width="0.79" height="0.95" fill="#ffd700" fill-opacity="0.32"/><rect x="22.12" y="1.78" width="3.16" height="0.95" fill="#c586c0" fill-opacity="0.32"/><rect x="26.07" y="1.78" width="13.43" height="0.95" fill="#ce9178" fill-opacity="0.32"/><rect x="39.50" y="1.78" width="0.79" height="0.95" fill="#cccccc" fill-opacity="0.32"/><rect x="0.00" y="3.37" width="4.74" height="0.95" fill="#c586c0" fill-opacity="0.32"/><rect x="5.53" y="3.37" width="0.79" height="0.95" fill="#ffd700" fill-opacity="0.32"/><rect x="7.11" y="3.37" width="7.90" height="0.95" fill="#9cdcfe" fill-opacity="0.32"/><rect x="15.80" y="3.37" width="0.79" height="0.95" fill="#ffd700" fill-opacity="0.32"/><rect x="17.38" y="3.37" width="3.16" height="0.95" fill="#c586c0" fill-opacity="0.32"/><rect x="21.33" y="3.37" width="7.11" height="0.95" fill="#ce9178" fill-opacity="0.32"/><rect x="28.44" y="3.37" width="0.79" height="0.95" fill="#cccccc" fill-opacity="0.32"/><rect x="0.00" y="4.96" width="4.74" height="0.95" fill="#c586c0" fill-opacity="0.32"/><rect x="5.53" y="4.96" width="0.79" height="0.95" fill="#569cd6" fill-opacity="0.32"/><rect x="7.11" y="4.96" width="1.58" height="0.95" fill="#c586c0" fill-opacity="0.32"/><rect x="9.48" y="4.96" width="4.74" height="0.95" fill="#9cdcfe" fill-opacity="0.32"/><rect x="15.01" y="4.96" width="3.16" height="0.95" fill="#c586c0" fill-opacity="0.32"/><rect x="18.96" y="4.96" width="6.32" height="0.95" fill="#ce9178" fill-opacity="0.32"/><rect x="25.28" y="4.96" width="0.79" height="0.95" fill="#cccccc" fill-opacity="0.32"/><rect x="0.00" y="6.54" width="4.74" height="0.95" fill="#c586c0" fill-opacity="0.32"/><rect x="5.53" y="6.54" width="0.79" height="0.95" fill="#ffd700" fill-opacity="0.32"/><rect x="7.11" y="6.54" width="3.16" height="0.95" fill="#9cdcfe" fill-opacity="0.32"/><rect x="11.06" y="6.54" width="0.79" height="0.95" fill="#ffd700" fill-opacity="0.32"/><rect x="12.64" y="6.54" width="3.16" height="0.95" fill="#c586c0" fill-opacity="0.32"/><rect x="16.59" y="6.54" width="19.75" height="0.95" fill="#ce9178" fill-opacity="0.32"/><rect x="36.34" y="6.54" width="0.79" height="0.95" fill="#cccccc" fill-opacity="0.32"/><rect x="0.00" y="9.71" width="0.79" height="0.95" fill="#cccccc" fill-opacity="0.32"/><rect x="0.79" y="9.71" width="7.90" height="0.95" fill="#dcdcaa" fill-opacity="0.32"/><rect x="8.69" y="9.71" width="1.58" height="0.95" fill="#ffd700" fill-opacity="0.32"/><rect x="0.00" y="11.29" width="4.74" height="0.95" fill="#c586c0" fill-opacity="0.32"/><rect x="5.53" y="11.29" width="3.95" height="0.95" fill="#569cd6" fill-opacity="0.32"/><rect x="10.27" y="11.29" width="8.69" height="0.95" fill="#4ec9b0" fill-opacity="0.32"/><rect x="19.75" y="11.29" width="0.79" height="0.95" fill="#ffd700" fill-opacity="0.32"/><rect x="1.58" y="12.88" width="8.69" height="0.95" fill="#569cd6" fill-opacity="0.32"/><rect x="10.27" y="12.88" width="0.79" height="0.95" fill="#da70d6" fill-opacity="0.32"/><rect x="3.16" y="14.46" width="0.79" height="0.95" fill="#cccccc" fill-opacity="0.32"/><rect x="3.95" y="14.46" width="12.64" height="0.95" fill="#dcdcaa" fill-opacity="0.32"/><rect x="16.59" y="14.46" width="0.79" height="0.95" fill="#179fff" fill-opacity="0.32"/><rect x="17.38" y="14.46" width="3.16" height="0.95" fill="#4ec9b0" fill-opacity="0.32"/><rect x="20.54" y="14.46" width="0.79" height="0.95" fill="#179fff" fill-opacity="0.32"/><rect x="3.16" y="16.05" width="5.53" height="0.95" fill="#569cd6" fill-opacity="0.32"/><rect x="9.48" y="16.05" width="6.32" height="0.95" fill="#569cd6" fill-opacity="0.32"/><rect x="16.59" y="16.05" width="11.06" height="0.95" fill="#9cdcfe" fill-opacity="0.32"/><rect x="27.65" y="16.05" width="0.79" height="0.95" fill="#cccccc" fill-opacity="0.32"/><rect x="29.23" y="16.05" width="7.90" height="0.95" fill="#4ec9b0" fill-opacity="0.32"/><rect x="37.13" y="16.05" width="0.79" height="0.95" fill="#da70d6" fill-opacity="0.32"/><rect x="37.92" y="16.05" width="3.16" height="0.95" fill="#4ec9b0" fill-opacity="0.32"/><rect x="41.08" y="16.05" width="0.79" height="0.95" fill="#da70d6" fill-opacity="0.32"/><rect x="41.87" y="16.05" width="0.79" height="0.95" fill="#cccccc" fill-opacity="0.32"/><rect x="1.58" y="17.63" width="0.79" height="0.95" fill="#da70d6" fill-opacity="0.32"/><rect x="3.16" y="17.63" width="0.79" height="0.95" fill="#da70d6" fill-opacity="0.32"/><rect x="3.95" y="17.63" width="0.79" height="0.95" fill="#cccccc" fill-opacity="0.32"/><rect x="1.58" y="20.80" width="2.37" height="0.95" fill="#6a9955" fill-opacity="0.32"/><rect x="2.37" y="22.39" width="0.79" height="0.95" fill="#6a9955" fill-opacity="0.32"/><rect x="3.95" y="22.39" width="5.53" height="0.95" fill="#6a9955" fill-opacity="0.32"/><rect x="10.27" y="22.39" width="0.79" height="0.95" fill="#6a9955" fill-opacity="0.32"/><rect x="11.85" y="22.39" width="2.37" height="0.95" fill="#6a9955" fill-opacity="0.32"/><rect x="15.01" y="22.39" width="3.16" height="0.95" fill="#6a9955" fill-opacity="0.32"/><rect x="18.96" y="22.39" width="3.16" height="0.95" fill="#6a9955" fill-opacity="0.32"/><rect x="22.91" y="22.39" width="7.11" height="0.95" fill="#6a9955" fill-opacity="0.32"/><rect x="30.81" y="22.39" width="6.32" height="0.95" fill="#6a9955" fill-opacity="0.32"/><rect x="2.37" y="23.97" width="0.79" height="0.95" fill="#6a9955" fill-opacity="0.32"/><rect x="3.95" y="23.97" width="4.74" height="0.95" fill="#569cd6" fill-opacity="0.32"/><rect x="9.48" y="23.97" width="3.95" height="0.95" fill="#9cdcfe" fill-opacity="0.32"/><rect x="14.22" y="23.97" width="0.79" height="0.95" fill="#6a9955" fill-opacity="0.32"/><rect x="15.80" y="23.97" width="4.74" height="0.95" fill="#6a9955" fill-opacity="0.32"/><rect x="21.33" y="23.97" width="3.95" height="0.95" fill="#6a9955" fill-opacity="0.32"/><rect x="26.07" y="23.97" width="5.53" height="0.95" fill="#6a9955" fill-opacity="0.32"/><rect x="2.37" y="25.56" width="0.79" height="0.95" fill="#6a9955" fill-opacity="0.32"/><rect x="3.95" y="25.56" width="4.74" height="0.95" fill="#569cd6" fill-opacity="0.32"/><rect x="9.48" y="25.56" width="6.32" height="0.95" fill="#9cdcfe" fill-opacity="0.32"/><rect x="16.59" y="25.56" width="0.79" height="0.95" fill="#6a9955" fill-opacity="0.32"/><rect x="18.17" y="25.56" width="4.74" height="0.95" fill="#6a9955" fill-opacity="0.32"/><rect x="23.70" y="25.56" width="3.95" height="0.95" fill="#6a9955" fill-opacity="0.32"/><rect x="28.44" y="25.56" width="3.16" height="0.95" fill="#6a9955" fill-opacity="0.32"/><rect x="32.39" y="25.56" width="6.32" height="0.95" fill="#6a9955" fill-opacity="0.32"/><rect x="2.37" y="27.14" width="0.79" height="0.95" fill="#6a9955" fill-opacity="0.32"/><rect x="3.95" y="27.14" width="6.32" height="0.95" fill="#569cd6" fill-opacity="0.32"/><rect x="11.06" y="27.14" width="10.27" height="0.95" fill="#6a9955" fill-opacity="0.32"/><rect x="22.12" y="27.14" width="0.79" height="0.95" fill="#6a9955" fill-opacity="0.32"/><rect x="23.70" y="27.14" width="5.53" height="0.95" fill="#6a9955" fill-opacity="0.32"/><rect x="30.02" y="27.14" width="3.16" height="0.95" fill="#6a9955" fill-opacity="0.32"/><rect x="33.97" y="27.14" width="4.74" height="0.95" fill="#6a9955" fill-opacity="0.32"/><rect x="2.37" y="28.73" width="0.79" height="0.95" fill="#6a9955" fill-opacity="0.32"/><rect x="3.95" y="28.73" width="5.53" height="0.95" fill="#569cd6" fill-opacity="0.32"/><rect x="10.27" y="28.73" width="3.95" height="0.95" fill="#6a9955" fill-opacity="0.32"/><rect x="15.01" y="28.73" width="1.58" height="0.95" fill="#6a9955" fill-opacity="0.32"/><rect x="17.38" y="28.73" width="3.16" height="0.95" fill="#6a9955" fill-opacity="0.32"/><rect x="21.33" y="28.73" width="3.16" height="0.95" fill="#6a9955" fill-opacity="0.32"/><rect x="25.28" y="28.73" width="3.95" height="0.95" fill="#6a9955" fill-opacity="0.32"/><rect x="30.02" y="28.73" width="5.53" height="0.95" fill="#6a9955" fill-opacity="0.32"/><rect x="36.34" y="28.73" width="4.74" height="0.95" fill="#6a9955" fill-opacity="0.32"/><rect x="41.87" y="28.73" width="1.58" height="0.95" fill="#6a9955" fill-opacity="0.32"/><rect x="44.24" y="28.73" width="6.32" height="0.95" fill="#6a9955" fill-opacity="0.32"/><rect x="51.35" y="28.73" width="7.11" height="0.95" fill="#6a9955" fill-opacity="0.32"/><rect x="59.25" y="28.73" width="3.95" height="0.95" fill="#6a9955" fill-opacity="0.32"/><rect x="2.37" y="30.31" width="1.58" height="0.95" fill="#6a9955" fill-opacity="0.32"/><rect x="1.58" y="31.90" width="3.95" height="0.95" fill="#569cd6" fill-opacity="0.32"/><rect x="6.32" y="31.90" width="7.90" height="0.95" fill="#dcdcaa" fill-opacity="0.32"/><rect x="14.22" y="31.90" width="0.79" height="0.95" fill="#da70d6" fill-opacity="0.32"/><rect x="15.01" y="31.90" width="3.95" height="0.95" fill="#9cdcfe" fill-opacity="0.32"/><rect x="18.96" y="31.90" width="0.79" height="0.95" fill="#cccccc" fill-opacity="0.32"/><rect x="20.54" y="31.90" width="4.74" height="0.95" fill="#4ec9b0" fill-opacity="0.32"/><rect x="25.28" y="31.90" width="0.79" height="0.95" fill="#cccccc" fill-opacity="0.32"/><rect x="26.86" y="31.90" width="6.32" height="0.95" fill="#9cdcfe" fill-opacity="0.32"/><rect x="33.18" y="31.90" width="0.79" height="0.95" fill="#cccccc" fill-opacity="0.32"/><rect x="34.76" y="31.90" width="4.74" height="0.95" fill="#4ec9b0" fill-opacity="0.32"/><rect x="39.50" y="31.90" width="0.79" height="0.95" fill="#da70d6" fill-opacity="0.32"/><rect x="40.29" y="31.90" width="0.79" height="0.95" fill="#cccccc" fill-opacity="0.32"/><rect x="41.87" y="31.90" width="5.53" height="0.95" fill="#4ec9b0" fill-opacity="0.32"/><rect x="47.40" y="31.90" width="0.79" height="0.95" fill="#da70d6" fill-opacity="0.32"/><rect x="48.19" y="31.90" width="3.16" height="0.95" fill="#4ec9b0" fill-opacity="0.32"/><rect x="51.35" y="31.90" width="0.79" height="0.95" fill="#da70d6" fill-opacity="0.32"/><rect x="52.93" y="31.90" width="0.79" height="0.95" fill="#da70d6" fill-opacity="0.32"/><rect x="3.16" y="33.48" width="1.58" height="0.95" fill="#6a9955" fill-opacity="0.32"/><rect x="5.53" y="33.48" width="3.95" height="0.95" fill="#6a9955" fill-opacity="0.32"/><rect x="10.27" y="33.48" width="1.58" height="0.95" fill="#6a9955" fill-opacity="0.32"/><rect x="12.64" y="33.48" width="3.16" height="0.95" fill="#6a9955" fill-opacity="0.32"/><rect x="16.59" y="33.48" width="5.53" height="0.95" fill="#6a9955" fill-opacity="0.32"/><rect x="22.91" y="33.48" width="4.74" height="0.95" fill="#6a9955" fill-opacity="0.32"/><rect x="3.16" y="35.07" width="3.95" height="0.95" fill="#569cd6" fill-opacity="0.32"/><rect x="7.90" y="35.07" width="9.48" height="0.95" fill="#4fc1ff" fill-opacity="0.32"/><rect x="18.17" y="35.07" width="0.79" height="0.95" fill="#cccccc" fill-opacity="0.32"/><rect x="19.75" y="35.07" width="3.95" height="0.95" fill="#c586c0" fill-opacity="0.32"/><rect x="24.49" y="35.07" width="3.16" height="0.95" fill="#569cd6" fill-opacity="0.32"/><rect x="27.65" y="35.07" width="0.79" height="0.95" fill="#cccccc" fill-opacity="0.32"/><rect x="28.44" y="35.07" width="11.85" height="0.95" fill="#dcdcaa" fill-opacity="0.32"/><rect x="40.29" y="35.07" width="0.79" height="0.95" fill="#179fff" fill-opacity="0.32"/><rect x="41.08" y="35.07" width="3.95" height="0.95" fill="#9cdcfe" fill-opacity="0.32"/><rect x="45.03" y="35.07" width="0.79" height="0.95" fill="#179fff" fill-opacity="0.32"/><rect x="45.82" y="35.07" width="0.79" height="0.95" fill="#cccccc" fill-opacity="0.32"/><rect x="3.16" y="36.66" width="1.58" height="0.95" fill="#c586c0" fill-opacity="0.32"/><rect x="5.53" y="36.66" width="0.79" height="0.95" fill="#179fff" fill-opacity="0.32"/><rect x="6.32" y="36.66" width="9.48" height="0.95" fill="#9cdcfe" fill-opacity="0.32"/><rect x="15.80" y="36.66" width="0.79" height="0.95" fill="#179fff" fill-opacity="0.32"/><rect x="17.38" y="36.66" width="0.79" height="0.95" fill="#179fff" fill-opacity="0.32"/><rect x="4.74" y="38.24" width="3.95" height="0.95" fill="#c586c0" fill-opacity="0.32"/><rect x="9.48" y="38.24" width="2.37" height="0.95" fill="#569cd6" fill-opacity="0.32"/><rect x="12.64" y="38.24" width="3.95" height="0.95" fill="#4ec9b0" fill-opacity="0.32"/><rect x="16.59" y="38.24" width="0.79" height="0.95" fill="#ffd700" fill-opacity="0.32"/><rect x="17.38" y="38.24" width="3.95" height="0.95" fill="#ce9178" fill-opacity="0.32"/><rect x="22.12" y="38.24" width="3.16" height="0.95" fill="#ce9178" fill-opacity="0.32"/><rect x="26.07" y="38.24" width="3.16" height="0.95" fill="#ce9178" fill-opacity="0.32"/><rect x="30.02" y="38.24" width="3.95" height="0.95" fill="#ce9178" fill-opacity="0.32"/><rect x="34.76" y="38.24" width="5.53" height="0.95" fill="#ce9178" fill-opacity="0.32"/><rect x="41.08" y="38.24" width="5.53" height="0.95" fill="#ce9178" fill-opacity="0.32"/><rect x="46.61" y="38.24" width="0.79" height="0.95" fill="#ffd700" fill-opacity="0.32"/><rect x="47.40" y="38.24" width="0.79" height="0.95" fill="#cccccc" fill-opacity="0.32"/><rect x="3.16" y="39.83" width="0.79" height="0.95" fill="#179fff" fill-opacity="0.32"/><rect x="3.16" y="43.00" width="1.58" height="0.95" fill="#6a9955" fill-opacity="0.32"/><rect x="5.53" y="43.00" width="3.16" height="0.95" fill="#6a9955" fill-opacity="0.32"/><rect x="9.48" y="43.00" width="6.32" height="0.95" fill="#6a9955" fill-opacity="0.32"/><rect x="16.59" y="43.00" width="3.16" height="0.95" fill="#6a9955" fill-opacity="0.32"/><rect x="20.54" y="43.00" width="4.74" height="0.95" fill="#6a9955" fill-opacity="0.32"/><rect x="26.07" y="43.00" width="3.95" height="0.95" fill="#6a9955" fill-opacity="0.32"/><rect x="30.81" y="43.00" width="5.53" height="0.95" fill="#6a9955" fill-opacity="0.32"/><rect x="37.13" y="43.00" width="1.58" height="0.95" fill="#6a9955" fill-opacity="0.32"/><rect x="39.50" y="43.00" width="4.74" height="0.95" fill="#6a9955" fill-opacity="0.32"/><rect x="45.03" y="43.00" width="1.58" height="0.95" fill="#6a9955" fill-opacity="0.32"/><rect x="47.40" y="43.00" width="2.37" height="0.95" fill="#6a9955" fill-opacity="0.32"/><rect x="50.56" y="43.00" width="9.48" height="0.95" fill="#6a9955" fill-opacity="0.32"/><rect x="3.16" y="44.58" width="3.95" height="0.95" fill="#569cd6" fill-opacity="0.32"/><rect x="7.90" y="44.58" width="7.90" height="0.95" fill="#4fc1ff" fill-opacity="0.32"/><rect x="16.59" y="44.58" width="0.79" height="0.95" fill="#cccccc" fill-opacity="0.32"/><rect x="18.17" y="44.58" width="1.58" height="0.95" fill="#b5cea8" fill-opacity="0.32"/><rect x="19.75" y="44.58" width="0.79" height="0.95" fill="#cccccc" fill-opacity="0.32"/><rect x="3.16" y="46.16" width="3.95" height="0.95" fill="#569cd6" fill-opacity="0.32"/><rect x="7.90" y="46.16" width="9.48" height="0.95" fill="#4fc1ff" fill-opacity="0.32"/><rect x="18.17" y="46.16" width="0.79" height="0.95" fill="#cccccc" fill-opacity="0.32"/><rect x="19.75" y="46.16" width="3.95" height="0.95" fill="#c586c0" fill-opacity="0.32"/><rect x="24.49" y="46.16" width="4.74" height="0.95" fill="#9cdcfe" fill-opacity="0.32"/><rect x="29.23" y="46.16" width="0.79" height="0.95" fill="#cccccc" fill-opacity="0.32"/><rect x="30.02" y="46.16" width="3.16" height="0.95" fill="#dcdcaa" fill-opacity="0.32"/><rect x="33.18" y="46.16" width="0.79" height="0.95" fill="#179fff" fill-opacity="0.32"/><rect x="33.97" y="46.16" width="6.32" height="0.95" fill="#9cdcfe" fill-opacity="0.32"/><rect x="40.29" y="46.16" width="0.79" height="0.95" fill="#cccccc" fill-opacity="0.32"/><rect x="41.87" y="46.16" width="7.90" height="0.95" fill="#9cdcfe" fill-opacity="0.32"/><rect x="49.77" y="46.16" width="0.79" height="0.95" fill="#179fff" fill-opacity="0.32"/><rect x="50.56" y="46.16" width="0.79" height="0.95" fill="#cccccc" fill-opacity="0.32"/><rect x="3.16" y="49.34" width="1.58" height="0.95" fill="#6a9955" fill-opacity="0.32"/><rect x="5.53" y="49.34" width="4.74" height="0.95" fill="#6a9955" fill-opacity="0.32"/><rect x="11.06" y="49.34" width="2.37" height="0.95" fill="#6a9955" fill-opacity="0.32"/><rect x="14.22" y="49.34" width="3.16" height="0.95" fill="#6a9955" fill-opacity="0.32"/><rect x="18.17" y="49.34" width="4.74" height="0.95" fill="#6a9955" fill-opacity="0.32"/><rect x="3.16" y="50.92" width="3.95" height="0.95" fill="#569cd6" fill-opacity="0.32"/><rect x="7.90" y="50.92" width="3.16" height="0.95" fill="#4fc1ff" fill-opacity="0.32"/><rect x="11.85" y="50.92" width="0.79" height="0.95" fill="#cccccc" fill-opacity="0.32"/><rect x="13.43" y="50.92" width="3.16" height="0.95" fill="#569cd6" fill-opacity="0.32"/><rect x="16.59" y="50.92" width="0.79" height="0.95" fill="#cccccc" fill-opacity="0.32"/><rect x="17.38" y="50.92" width="11.06" height="0.95" fill="#9cdcfe" fill-opacity="0.32"/><rect x="28.44" y="50.92" width="0.79" height="0.95" fill="#cccccc" fill-opacity="0.32"/><rect x="29.23" y="50.92" width="4.74" height="0.95" fill="#dcdcaa" fill-opacity="0.32"/><rect x="33.97" y="50.92" width="0.79" height="0.95" fill="#179fff" fill-opacity="0.32"/><rect x="34.76" y="50.92" width="0.79" height="0.95" fill="#ffd700" fill-opacity="0.32"/><rect x="4.74" y="52.51" width="3.95" height="0.95" fill="#9cdcfe" fill-opacity="0.32"/><rect x="8.69" y="52.51" width="0.79" height="0.95" fill="#cccccc" fill-opacity="0.32"/><rect x="4.74" y="54.09" width="9.48" height="0.95" fill="#9cdcfe" fill-opacity="0.32"/><rect x="14.22" y="54.09" width="0.79" height="0.95" fill="#cccccc" fill-opacity="0.32"/><rect x="3.16" y="55.68" width="0.79" height="0.95" fill="#ffd700" fill-opacity="0.32"/><rect x="3.95" y="55.68" width="0.79" height="0.95" fill="#179fff" fill-opacity="0.32"/><rect x="4.74" y="55.68" width="0.79" height="0.95" fill="#cccccc" fill-opacity="0.32"/><rect x="3.16" y="58.84" width="2.37" height="0.95" fill="#c586c0" fill-opacity="0.32"/><rect x="6.32" y="58.84" width="0.79" height="0.95" fill="#179fff" fill-opacity="0.32"/><rect x="4.74" y="60.43" width="1.58" height="0.95" fill="#6a9955" fill-opacity="0.32"/><rect x="7.11" y="60.43" width="3.16" height="0.95" fill="#6a9955" fill-opacity="0.32"/><rect x="11.06" y="60.43" width="3.16" height="0.95" fill="#6a9955" fill-opacity="0.32"/><rect x="15.01" y="60.43" width="1.58" height="0.95" fill="#6a9955" fill-opacity="0.32"/><rect x="17.38" y="60.43" width="6.32" height="0.95" fill="#6a9955" fill-opacity="0.32"/><rect x="4.74" y="62.02" width="4.74" height="0.95" fill="#c586c0" fill-opacity="0.32"/><rect x="10.27" y="62.02" width="3.95" height="0.95" fill="#c586c0" fill-opacity="0.32"/><rect x="15.01" y="62.02" width="3.16" height="0.95" fill="#569cd6" fill-opacity="0.32"/><rect x="18.17" y="62.02" width="0.79" height="0.95" fill="#cccccc" fill-opacity="0.32"/><rect x="18.96" y="62.02" width="11.06" height="0.95" fill="#9cdcfe" fill-opacity="0.32"/><rect x="30.02" y="62.02" width="0.79" height="0.95" fill="#cccccc" fill-opacity="0.32"/><rect x="30.81" y="62.02" width="3.16" height="0.95" fill="#dcdcaa" fill-opacity="0.32"/><rect x="33.97" y="62.02" width="0.79" height="0.95" fill="#ffd700" fill-opacity="0.32"/><rect x="34.76" y="62.02" width="3.16" height="0.95" fill="#9cdcfe" fill-opacity="0.32"/><rect x="37.92" y="62.02" width="0.79" height="0.95" fill="#ffd700" fill-opacity="0.32"/><rect x="38.71" y="62.02" width="0.79" height="0.95" fill="#cccccc" fill-opacity="0.32"/><rect x="3.16" y="63.60" width="0.79" height="0.95" fill="#179fff" fill-opacity="0.32"/><rect x="4.74" y="63.60" width="3.95" height="0.95" fill="#c586c0" fill-opacity="0.32"/><rect x="9.48" y="63.60" width="0.79" height="0.95" fill="#179fff" fill-opacity="0.32"/><rect x="10.27" y="63.60" width="3.95" height="0.95" fill="#9cdcfe" fill-opacity="0.32"/><rect x="14.22" y="63.60" width="0.79" height="0.95" fill="#179fff" fill-opacity="0.32"/><rect x="15.80" y="63.60" width="0.79" height="0.95" fill="#179fff" fill-opacity="0.32"/><rect x="4.74" y="65.19" width="3.95" height="0.95" fill="#c586c0" fill-opacity="0.32"/><rect x="9.48" y="65.19" width="2.37" height="0.95" fill="#569cd6" fill-opacity="0.32"/><rect x="12.64" y="65.19" width="3.95" height="0.95" fill="#4ec9b0" fill-opacity="0.32"/><rect x="16.59" y="65.19" width="0.79" height="0.95" fill="#ffd700" fill-opacity="0.32"/><rect x="17.38" y="65.19" width="5.53" height="0.95" fill="#ce9178" fill-opacity="0.32"/><rect x="23.70" y="65.19" width="1.58" height="0.95" fill="#ce9178" fill-opacity="0.32"/><rect x="26.07" y="65.19" width="4.74" height="0.95" fill="#ce9178" fill-opacity="0.32"/><rect x="31.60" y="65.19" width="3.95" height="0.95" fill="#ce9178" fill-opacity="0.32"/><rect x="36.34" y="65.19" width="1.58" height="0.95" fill="#569cd6" fill-opacity="0.32"/><rect x="37.92" y="65.19" width="3.95" height="0.95" fill="#9cdcfe" fill-opacity="0.32"/><rect x="41.87" y="65.19" width="0.79" height="0.95" fill="#569cd6" fill-opacity="0.32"/><rect x="42.66" y="65.19" width="0.79" height="0.95" fill="#ce9178" fill-opacity="0.32"/><rect x="43.45" y="65.19" width="0.79" height="0.95" fill="#ffd700" fill-opacity="0.32"/><rect x="44.24" y="65.19" width="0.79" height="0.95" fill="#cccccc" fill-opacity="0.32"/><rect x="3.16" y="66.77" width="0.79" height="0.95" fill="#179fff" fill-opacity="0.32"/><rect x="1.58" y="68.36" width="0.79" height="0.95" fill="#da70d6" fill-opacity="0.32"/><rect x="1.58" y="71.53" width="2.37" height="0.95" fill="#6a9955" fill-opacity="0.32"/><rect x="2.37" y="73.11" width="0.79" height="0.95" fill="#6a9955" fill-opacity="0.32"/><rect x="3.95" y="73.11" width="3.95" height="0.95" fill="#6a9955" fill-opacity="0.32"/><rect x="8.69" y="73.11" width="0.79" height="0.95" fill="#6a9955" fill-opacity="0.32"/><rect x="10.27" y="73.11" width="3.16" height="0.95" fill="#6a9955" fill-opacity="0.32"/><rect x="14.22" y="73.11" width="1.58" height="0.95" fill="#6a9955" fill-opacity="0.32"/><rect x="16.59" y="73.11" width="3.95" height="0.95" fill="#6a9955" fill-opacity="0.32"/><rect x="21.33" y="73.11" width="5.53" height="0.95" fill="#6a9955" fill-opacity="0.32"/><rect x="2.37" y="74.70" width="0.79" height="0.95" fill="#6a9955" fill-opacity="0.32"/><rect x="3.95" y="74.70" width="4.74" height="0.95" fill="#569cd6" fill-opacity="0.32"/><rect x="9.48" y="74.70" width="3.95" height="0.95" fill="#9cdcfe" fill-opacity="0.32"/><rect x="14.22" y="74.70" width="0.79" height="0.95" fill="#6a9955" fill-opacity="0.32"/><rect x="15.80" y="74.70" width="4.74" height="0.95" fill="#6a9955" fill-opacity="0.32"/><rect x="21.33" y="74.70" width="3.95" height="0.95" fill="#6a9955" fill-opacity="0.32"/><rect x="26.07" y="74.70" width="5.53" height="0.95" fill="#6a9955" fill-opacity="0.32"/><rect x="2.37" y="76.28" width="0.79" height="0.95" fill="#6a9955" fill-opacity="0.32"/><rect x="3.95" y="76.28" width="6.32" height="0.95" fill="#569cd6" fill-opacity="0.32"/><rect x="11.06" y="76.28" width="9.48" height="0.95" fill="#6a9955" fill-opacity="0.32"/><rect x="21.33" y="76.28" width="0.79" height="0.95" fill="#6a9955" fill-opacity="0.32"/><rect x="22.91" y="76.28" width="3.95" height="0.95" fill="#6a9955" fill-opacity="0.32"/><rect x="27.65" y="76.28" width="0.79" height="0.95" fill="#6a9955" fill-opacity="0.32"/><rect x="29.23" y="76.28" width="3.16" height="0.95" fill="#6a9955" fill-opacity="0.32"/><rect x="33.18" y="76.28" width="4.74" height="0.95" fill="#6a9955" fill-opacity="0.32"/><rect x="38.71" y="76.28" width="1.58" height="0.95" fill="#6a9955" fill-opacity="0.32"/><rect x="41.08" y="76.28" width="4.74" height="0.95" fill="#6a9955" fill-opacity="0.32"/><rect x="46.61" y="76.28" width="3.16" height="0.95" fill="#6a9955" fill-opacity="0.32"/><rect x="50.56" y="76.28" width="7.11" height="0.95" fill="#6a9955" fill-opacity="0.32"/><rect x="2.37" y="77.86" width="1.58" height="0.95" fill="#6a9955" fill-opacity="0.32"/><rect x="1.58" y="79.45" width="3.95" height="0.95" fill="#569cd6" fill-opacity="0.32"/><rect x="6.32" y="79.45" width="11.85" height="0.95" fill="#dcdcaa" fill-opacity="0.32"/><rect x="18.17" y="79.45" width="0.79" height="0.95" fill="#da70d6" fill-opacity="0.32"/><rect x="18.96" y="79.45" width="3.95" height="0.95" fill="#9cdcfe" fill-opacity="0.32"/><rect x="22.91" y="79.45" width="0.79" height="0.95" fill="#cccccc" fill-opacity="0.32"/><rect x="24.49" y="79.45" width="4.74" height="0.95" fill="#4ec9b0" fill-opacity="0.32"/><rect x="29.23" y="79.45" width="0.79" height="0.95" fill="#da70d6" fill-opacity="0.32"/><rect x="30.02" y="79.45" width="0.79" height="0.95" fill="#cccccc" fill-opacity="0.32"/><rect x="31.60" y="79.45" width="5.53" height="0.95" fill="#4ec9b0" fill-opacity="0.32"/><rect x="37.13" y="79.45" width="0.79" height="0.95" fill="#da70d6" fill-opacity="0.32"/><rect x="37.92" y="79.45" width="3.16" height="0.95" fill="#4ec9b0" fill-opacity="0.32"/><rect x="41.87" y="79.45" width="0.79" height="0.95" fill="#cccccc" fill-opacity="0.32"/><rect x="43.45" y="79.45" width="3.16" height="0.95" fill="#569cd6" fill-opacity="0.32"/><rect x="46.61" y="79.45" width="0.79" height="0.95" fill="#da70d6" fill-opacity="0.32"/><rect x="48.19" y="79.45" width="0.79" height="0.95" fill="#da70d6" fill-opacity="0.32"/><rect x="3.16" y="81.03" width="2.37" height="0.95" fill="#c586c0" fill-opacity="0.32"/><rect x="6.32" y="81.03" width="0.79" height="0.95" fill="#179fff" fill-opacity="0.32"/><rect x="4.74" y="82.62" width="4.74" height="0.95" fill="#c586c0" fill-opacity="0.32"/><rect x="10.27" y="82.62" width="3.95" height="0.95" fill="#c586c0" fill-opacity="0.32"/><rect x="15.01" y="82.62" width="3.16" height="0.95" fill="#569cd6" fill-opacity="0.32"/><rect x="18.17" y="82.62" width="0.79" height="0.95" fill="#cccccc" fill-opacity="0.32"/><rect x="18.96" y="82.62" width="11.06" height="0.95" fill="#9cdcfe" fill-opacity="0.32"/><rect x="30.02" y="82.62" width="0.79" height="0.95" fill="#cccccc" fill-opacity="0.32"/><rect x="30.81" y="82.62" width="5.53" height="0.95" fill="#dcdcaa" fill-opacity="0.32"/><rect x="36.34" y="82.62" width="0.79" height="0.95" fill="#ffd700" fill-opacity="0.32"/><rect x="37.13" y="82.62" width="0.79" height="0.95" fill="#da70d6" fill-opacity="0.32"/><rect x="6.32" y="84.20" width="3.95" height="0.95" fill="#9cdcfe" fill-opacity="0.32"/><rect x="10.27" y="84.20" width="0.79" height="0.95" fill="#cccccc" fill-opacity="0.32"/><rect x="11.85" y="84.20" width="0.79" height="0.95" fill="#179fff" fill-opacity="0.32"/><rect x="13.43" y="84.20" width="3.95" height="0.95" fill="#9cdcfe" fill-opacity="0.32"/><rect x="17.38" y="84.20" width="0.79" height="0.95" fill="#cccccc" fill-opacity="0.32"/><rect x="18.96" y="84.20" width="3.95" height="0.95" fill="#9cdcfe" fill-opacity="0.32"/><rect x="22.91" y="84.20" width="0.79" height="0.95" fill="#cccccc" fill-opacity="0.32"/><rect x="23.70" y="84.20" width="8.69" height="0.95" fill="#dcdcaa" fill-opacity="0.32"/><rect x="32.39" y="84.20" width="1.58" height="0.95" fill="#ffd700" fill-opacity="0.32"/><rect x="33.97" y="84.20" width="0.79" height="0.95" fill="#cccccc" fill-opacity="0.32"/><rect x="34.76" y="84.20" width="3.16" height="0.95" fill="#dcdcaa" fill-opacity="0.32"/><rect x="37.92" y="84.20" width="1.58" height="0.95" fill="#ffd700" fill-opacity="0.32"/><rect x="40.29" y="84.20" width="0.79" height="0.95" fill="#179fff" fill-opacity="0.32"/><rect x="41.08" y="84.20" width="0.79" height="0.95" fill="#cccccc" fill-opacity="0.32"/><rect x="4.74" y="85.79" width="0.79" height="0.95" fill="#da70d6" fill-opacity="0.32"/><rect x="5.53" y="85.79" width="0.79" height="0.95" fill="#ffd700" fill-opacity="0.32"/><rect x="6.32" y="85.79" width="0.79" height="0.95" fill="#cccccc" fill-opacity="0.32"/><rect x="3.16" y="87.38" width="0.79" height="0.95" fill="#179fff" fill-opacity="0.32"/><rect x="4.74" y="87.38" width="3.95" height="0.95" fill="#c586c0" fill-opacity="0.32"/><rect x="9.48" y="87.38" width="0.79" height="0.95" fill="#179fff" fill-opacity="0.32"/><rect x="10.27" y="87.38" width="3.95" height="0.95" fill="#9cdcfe" fill-opacity="0.32"/><rect x="14.22" y="87.38" width="0.79" height="0.95" fill="#179fff" fill-opacity="0.32"/><rect x="15.80" y="87.38" width="0.79" height="0.95" fill="#179fff" fill-opacity="0.32"/><rect x="4.74" y="88.96" width="3.95" height="0.95" fill="#c586c0" fill-opacity="0.32"/><rect x="9.48" y="88.96" width="2.37" height="0.95" fill="#569cd6" fill-opacity="0.32"/><rect x="12.64" y="88.96" width="3.95" height="0.95" fill="#4ec9b0" fill-opacity="0.32"/><rect x="16.59" y="88.96" width="0.79" height="0.95" fill="#ffd700" fill-opacity="0.32"/><rect x="17.38" y="88.96" width="5.53" height="0.95" fill="#ce9178" fill-opacity="0.32"/><rect x="23.70" y="88.96" width="1.58" height="0.95" fill="#ce9178" fill-opacity="0.32"/><rect x="26.07" y="88.96" width="3.16" height="0.95" fill="#ce9178" fill-opacity="0.32"/><rect x="30.02" y="88.96" width="3.95" height="0.95" fill="#ce9178" fill-opacity="0.32"/><rect x="34.76" y="88.96" width="1.58" height="0.95" fill="#569cd6" fill-opacity="0.32"/><rect x="36.34" y="88.96" width="3.95" height="0.95" fill="#9cdcfe" fill-opacity="0.32"/><rect x="40.29" y="88.96" width="0.79" height="0.95" fill="#569cd6" fill-opacity="0.32"/><rect x="41.08" y="88.96" width="0.79" height="0.95" fill="#ce9178" fill-opacity="0.32"/><rect x="41.87" y="88.96" width="0.79" height="0.95" fill="#ffd700" fill-opacity="0.32"/><rect x="42.66" y="88.96" width="0.79" height="0.95" fill="#cccccc" fill-opacity="0.32"/><rect x="3.16" y="90.55" width="0.79" height="0.95" fill="#179fff" fill-opacity="0.32"/><rect x="1.58" y="92.13" width="0.79" height="0.95" fill="#da70d6" fill-opacity="0.32"/><rect x="0.00" y="93.72" width="0.79" height="0.95" fill="#ffd700" fill-opacity="0.32"/></svg>
<div class="abs" style="left:1101px;top:10.6px;font-size:7.45px;line-height:10px;color:#9d9d9d">CHAT</div><div class="abs" style="left:1136.8px;top:10.6px;font-size:7.45px;line-height:10px;color:#e7e7e7">TERMINAL</div><div class="abs" style="left:1136px;top:22.4px;width:40px;height:1px;background:#0078d4"></div><svg class="abs" style="left:1379.5px;top:10px;" width="11.5" height="11" viewBox="0 0 11.5 11" fill="none"><rect x="0.8" y="0.8" width="9.6" height="9.2" rx="1.2" stroke="#c0c0c0" stroke-width="0.95" fill="none"/><path d="M2.8 3.4 l2 1.7 -2 1.7 M5.6 8 h2.4" stroke="#c0c0c0" stroke-width="0.95" fill="none"/></svg><div class="abs" style="left:1392.6px;top:10.4px;font-size:7.9px;line-height:11px;color:#d0d0d0">node</div><svg class="abs" style="left:1417.5px;top:10.6px;" width="10" height="10" viewBox="0 0 10 10" fill="none"><path d="M5 0.6 v8.8 M0.6 5 h8.8" stroke="#c0c0c0" stroke-width="0.95" fill="none"/></svg><svg class="abs" style="left:1431px;top:13px;" width="6" height="4" viewBox="0 0 6 4" fill="none"><path d="M0.8 0.8 l2.2 2.2 2.2 -2.2" stroke="#a0a0a0" stroke-width="0.8"/></svg><svg class="abs" style="left:1443px;top:10.4px;" width="11" height="11" viewBox="0 0 11 11" fill="none"><rect x="0.8" y="0.8" width="9.4" height="9.4" rx="1.2" stroke="#c0c0c0" stroke-width="0.95" fill="none"/><path d="M0.8 5.5 h9.4" stroke="#c0c0c0" stroke-width="0.95" fill="none"/></svg><svg class="abs" style="left:1461.5px;top:10px;" width="9" height="11" viewBox="0 0 9 11" fill="none"><path d="M0.6 2.4 h7.8 M3 2.4 v-1.4 h3 v1.4 M1.6 2.4 l0.6 7.8 h4.6 l0.6 -7.8 M3.5 4 v4.6 M5.5 4 v4.6" stroke="#c0c0c0" stroke-width="0.95" fill="none"/></svg><div class="abs" style="left:1479.4px;top:15.2px;width:12px;height:2px"><span class="abs" style="left:0.0px;top:0;width:1.4px;height:1.4px;border-radius:50%;background:#b8b8b8"></span><span class="abs" style="left:3.2px;top:0;width:1.4px;height:1.4px;border-radius:50%;background:#b8b8b8"></span><span class="abs" style="left:6.4px;top:0;width:1.4px;height:1.4px;border-radius:50%;background:#b8b8b8"></span></div><div class="abs" style="left:1496.6px;top:10px;width:0.9px;height:11.2px;background:#555"></div><svg class="abs" style="left:1504.5px;top:10.5px;" width="10" height="10" viewBox="0 0 10 10" fill="none"><path d="M0.8 3.2 v-2.4 h2.4 M6.8 0.8 h2.4 v2.4 M9.2 6.8 v2.4 h-2.4 M3.2 9.2 h-2.4 v-2.4" stroke="#c0c0c0" stroke-width="0.95" fill="none"/></svg><svg class="abs" style="left:1523px;top:11px;" width="9" height="9" viewBox="0 0 9 9" fill="none"><path d="M1 1 L8 8 M8 1 L1 8" stroke="#c0c0c0" stroke-width="0.95"/></svg><div class="abs" style="left:1101px;top:755.6px;width:429px;height:0.9px;background:#48443f"></div><div class="abs" style="left:1101px;top:774.9px;width:429px;height:0.9px;background:#48443f"></div><div class="tl" style="left:1101.10px;top:760.44px;color:#d0d0d0">&gt;</div><svg class="abs" style="left:1110.7479999999998px;top:782.8px;" width="10" height="5.5" viewBox="0 0 10 5.5" fill="none"><path d="M0.3 0.3 L3.8 2.4 L0.3 4.6 Z M4.6 0.3 L8.1 2.4 L4.6 4.6 Z" fill="#a887f0"/></svg><div class="tl" style="left:1125.22px;top:779.73px;color:#a98bf0">accept edits on <span style="color:#7d6aa8">(shift+tab to cycle)</span></div><svg class="abs" style="left:1424.108px;top:781.2px;" width="8" height="8" viewBox="0 0 8 8" fill="none"><rect x="0.6" y="0.6" width="4.6" height="4.6" rx="0.6" stroke="#5f96c8" stroke-width="0.8" fill="none"/><rect x="2.6" y="2.6" width="4.6" height="4.6" rx="0.6" stroke="#5f96c8" stroke-width="0.8" fill="#181818"/></svg><div class="tl" style="left:1433.96px;top:779.73px;color:#6aa3d8">In user.service.ts</div>
<div class="ln" style="left:250px;top:52.40px;color:#6e7681">1</div>
<div class="ln" style="left:250px;top:64.46px;color:#6e7681">2</div>
<div class="ln" style="left:250px;top:76.52px;color:#6e7681">3</div>
<div class="ln" style="left:250px;top:88.58px;color:#6e7681">4</div>
<div class="ln" style="left:250px;top:100.64px;color:#6e7681">5</div>
<div class="ln" style="left:250px;top:112.70px;color:#6e7681">6</div>
<div class="ln" style="left:250px;top:135.06px;color:#6e7681">7</div>
<div class="ln" style="left:250px;top:147.12px;color:#6e7681">8</div>
<div class="ln" style="left:250px;top:159.18px;color:#6e7681">9</div>
<div class="ln" style="left:250px;top:171.24px;color:#6e7681">10</div>
<div class="ln" style="left:250px;top:183.30px;color:#6e7681">11</div>
<div class="ln" style="left:250px;top:195.36px;color:#6e7681">12</div>
<div class="ln" style="left:250px;top:207.42px;color:#6e7681">13</div>
<div class="ln" style="left:250px;top:219.48px;color:#6e7681">14</div>
<div class="ln" style="left:250px;top:231.54px;color:#6e7681">15</div>
<div class="ln" style="left:250px;top:243.60px;color:#6e7681">16</div>
<div class="ln" style="left:250px;top:255.66px;color:#6e7681">17</div>
<div class="ln" style="left:250px;top:267.72px;color:#6e7681">18</div>
<div class="ln" style="left:250px;top:279.78px;color:#6e7681">19</div>
<div class="ln" style="left:250px;top:291.84px;color:#6e7681">20</div>
<div class="ln" style="left:250px;top:303.90px;color:#6e7681">21</div>
<div class="ln" style="left:250px;top:315.96px;color:#6e7681">22</div>
<div class="ln" style="left:250px;top:328.02px;color:#6e7681">23</div>
<div class="ln" style="left:250px;top:340.08px;color:#6e7681">24</div>
<div class="ln" style="left:250px;top:352.14px;color:#6e7681">25</div>
<div class="ln" style="left:250px;top:364.20px;color:#6e7681">26</div>
<div class="ln" style="left:250px;top:376.26px;color:#6e7681">27</div>
<div class="ln" style="left:250px;top:388.32px;color:#cccccc">28</div>
<div class="ln" style="left:250px;top:400.38px;color:#6e7681">29</div>
<div class="ln" style="left:250px;top:412.44px;color:#6e7681">30</div>
<div class="ln" style="left:250px;top:424.50px;color:#6e7681">31</div>
<div class="ln" style="left:250px;top:436.56px;color:#6e7681">32</div>
<div class="ln" style="left:250px;top:448.62px;color:#6e7681">33</div>
<div class="ln" style="left:250px;top:460.68px;color:#6e7681">34</div>
<div class="ln" style="left:250px;top:472.74px;color:#6e7681">35</div>
<div class="ln" style="left:250px;top:484.80px;color:#6e7681">36</div>
<div class="ln" style="left:250px;top:496.86px;color:#6e7681">37</div>
<div class="ln" style="left:250px;top:508.92px;color:#6e7681">38</div>
<div class="ln" style="left:250px;top:520.98px;color:#6e7681">39</div>
<div class="ln" style="left:250px;top:533.04px;color:#6e7681">40</div>
<div class="ln" style="left:250px;top:545.10px;color:#6e7681">41</div>
<div class="ln" style="left:250px;top:557.16px;color:#6e7681">42</div>
<div class="ln" style="left:250px;top:569.22px;color:#6e7681">43</div>
<div class="ln" style="left:250px;top:581.28px;color:#6e7681">44</div>
<div class="ln" style="left:250px;top:593.34px;color:#6e7681">45</div>
<div class="ln" style="left:250px;top:605.40px;color:#6e7681">46</div>
<div class="ln" style="left:250px;top:617.46px;color:#6e7681">47</div>
<div class="ln" style="left:250px;top:629.52px;color:#6e7681">48</div>
<div class="ln" style="left:250px;top:641.58px;color:#6e7681">49</div>
<div class="ln" style="left:250px;top:653.64px;color:#6e7681">50</div>
<div class="ln" style="left:250px;top:665.70px;color:#6e7681">51</div>
<div class="ln" style="left:250px;top:677.76px;color:#6e7681">52</div>
<div class="ln" style="left:250px;top:689.82px;color:#6e7681">53</div>
<div class="ln" style="left:250px;top:701.88px;color:#6e7681">54</div>
<div class="ln" style="left:250px;top:713.94px;color:#6e7681">55</div>
<div class="ln" style="left:250px;top:726.00px;color:#6e7681">56</div>
<div class="ln" style="left:250px;top:738.06px;color:#6e7681">57</div>
<div class="ln" style="left:250px;top:750.12px;color:#6e7681">58</div>
<div class="ln" style="left:250px;top:762.18px;color:#6e7681">59</div>
<div class="ln" style="left:250px;top:774.24px;color:#6e7681">60</div>
<div class="ln" style="left:250px;top:786.30px;color:#6e7681">61</div>
<div class="cl" style="left:297.60px;top:52.40px"><span class="k">import</span> <span class="b1">{</span> <span class="v">Injectable</span> <span class="b1">}</span> <span class="k">from</span> <span class="s">'@nestjs/common'</span><span class="p">;</span></div>
<div class="cl" style="left:297.60px;top:64.46px"><span class="k">import</span> <span class="b1">{</span> <span class="v">InjectRepository</span> <span class="b1">}</span> <span class="k">from</span> <span class="s">'@nestjs/typeorm'</span><span class="p">;</span></div>
<div class="cl" style="left:297.60px;top:76.52px"><span class="k">import</span> <span class="b1">{</span> <span class="v">Repository</span> <span class="b1">}</span> <span class="k">from</span> <span class="s">'typeorm'</span><span class="p">;</span></div>
<div class="cl" style="left:297.60px;top:88.58px"><span class="k">import</span> <span class="c2">*</span> <span class="k">as</span> <span class="v">bcrypt</span> <span class="k">from</span> <span class="s">'bcrypt'</span><span class="p">;</span></div>
<div class="cl" style="left:297.60px;top:100.64px"><span class="k">import</span> <span class="b1">{</span> <span class="v">User</span> <span class="b1">}</span> <span class="k">from</span> <span class="s">'../entities/user.entity'</span><span class="p">;</span></div>
<div class="cl" style="left:297.60px;top:112.70px"></div>
<div class="cl" style="left:297.60px;top:135.06px"><span class="p">@</span><span class="f">Injectable</span><span class="b1">()</span></div>
<div class="cl" style="left:297.60px;top:147.12px"><span class="k">export</span> <span class="c2">class</span> <span class="t">UserService</span> <span class="b1">{</span></div>
<div class="cl" style="left:297.60px;top:159.18px">  <span class="c2">constructor</span><span class="b2">(</span></div>
<div class="cl" style="left:297.60px;top:171.24px">    <span class="p">@</span><span class="f">InjectRepository</span><span class="b3">(</span><span class="t">User</span><span class="b3">)</span></div>
<div class="cl" style="left:297.60px;top:183.30px">    <span class="c2">private</span> <span class="c2">readonly</span> <span class="v">userRepository</span><span class="p">:</span> <span class="t">Repository</span><span class="b2">&lt;</span><span class="t">User</span><span class="b2">&gt;</span><span class="p">,</span></div>
<div class="cl" style="left:297.60px;top:195.36px">  <span class="b2">)</span> <span class="b2">{</span>}</div>
<div class="cl" style="left:297.60px;top:207.42px"></div>
<div class="cl" style="left:297.60px;top:219.48px">  <span class="cm">/**</span></div>
<div class="cl" style="left:297.60px;top:231.54px">  <span class="cm"> * Creates a new user with encrypted password</span></div>
<div class="cl" style="left:297.60px;top:243.60px">  <span class="cm"> * </span><span class="c2">@param</span> <span class="v">email</span><span class="cm"> - User's email address</span></div>
<div class="cl" style="left:297.60px;top:255.66px">  <span class="cm"> * </span><span class="c2">@param</span> <span class="v">password</span><span class="cm"> - User's plain text password</span></div>
<div class="cl" style="left:297.60px;top:267.72px">  <span class="cm"> * </span><span class="c2">@returns</span><span class="cm"> Promise&lt;User&gt; - Created user entity</span></div>
<div class="cl" style="left:297.60px;top:279.78px">  <span class="cm"> * </span><span class="c2">@throws</span><span class="cm"> Error if user with email already exists or database operation fails</span></div>
<div class="cl" style="left:297.60px;top:291.84px">  <span class="cm"> */</span></div>
<div class="cl" style="left:297.60px;top:303.90px">  <span class="c2">async</span> <span class="f">createUser</span><span class="b2">(</span><span class="v">email</span><span class="p">:</span> <span class="t">string</span><span class="p">,</span> <span class="v">password</span><span class="p">:</span> <span class="t">string</span><span class="b2">)</span><span class="p">:</span> <span class="t">Promise</span><span class="b2">&lt;</span><span class="t">User</span><span class="b2">&gt;</span> <span class="b2x">{</span></div>
<div class="cl" style="left:297.60px;top:315.96px">    <span class="cm">// Check if user already exists</span></div>
<div class="cl" style="left:297.60px;top:328.02px">    <span class="c2">const</span> <span class="v2">existingUser</span> <span class="p">=</span> <span class="k">await</span> <span class="c2">this</span><span class="p">.</span><span class="f">findUserByEmail</span><span class="b3">(</span><span class="v">email</span><span class="b3">)</span><span class="p">;</span></div>
<div class="cl" style="left:297.60px;top:340.08px">    <span class="k">if</span> <span class="b3">(</span><span class="v">existingUser</span><span class="b3">)</span> <span class="b3">{</span></div>
<div class="cl" style="left:297.60px;top:352.14px">      <span class="k">throw</span> <span class="c2">new</span> <span class="t">Error</span><span class="b1">(</span><span class="s">'User with this email already exists'</span><span class="b1">)</span><span class="p">;</span></div>
<div class="cl" style="left:297.60px;top:364.20px">    <span class="b3">}</span></div>
<div class="cl" style="left:297.60px;top:376.26px"></div>
<div class="cl" style="left:297.60px;top:388.32px">    <span class="cm">// Hash password with bcrypt using minimum 12 rounds as per requirements</span></div>
<div class="cl" style="left:297.60px;top:400.38px">    <span class="c2">const</span> <span class="v2">saltRounds</span> <span class="p">=</span> <span class="n">12</span><span class="p">;</span></div>
<div class="cl" style="left:297.60px;top:412.44px">    <span class="c2">const</span> <span class="v2">passwordHash</span> <span class="p">=</span> <span class="k">await</span> <span class="v">bcrypt</span><span class="p">.</span><span class="f">hash</span><span class="b3">(</span><span class="v">password</span><span class="p">,</span> <span class="v">saltRounds</span><span class="b3">)</span><span class="p">;</span></div>
<div class="cl" style="left:297.60px;top:424.50px"></div>
<div class="cl" style="left:297.60px;top:436.56px">    <span class="cm">// Create new user entity</span></div>
<div class="cl" style="left:297.60px;top:448.62px">    <span class="c2">const</span> <span class="v2">user</span> <span class="p">=</span> <span class="c2">this</span><span class="p">.</span><span class="v">userRepository</span><span class="p">.</span><span class="f">create</span><span class="b3">(</span><span class="b1">{</span></div>
<div class="cl" style="left:297.60px;top:460.68px">      <span class="v">email</span><span class="p">,</span></div>
<div class="cl" style="left:297.60px;top:472.74px">      <span class="v">passwordHash</span><span class="p">,</span></div>
<div class="cl" style="left:297.60px;top:484.80px">    <span class="b1">}</span><span class="b3">)</span><span class="p">;</span></div>
<div class="cl" style="left:297.60px;top:496.86px"></div>
<div class="cl" style="left:297.60px;top:508.92px">    <span class="k">try</span> <span class="b3">{</span></div>
<div class="cl" style="left:297.60px;top:520.98px">      <span class="cm">// Save user to database</span></div>
<div class="cl" style="left:297.60px;top:533.04px">      <span class="k">return</span> <span class="k">await</span> <span class="c2">this</span><span class="p">.</span><span class="v">userRepository</span><span class="p">.</span><span class="f">save</span><span class="b1">(</span><span class="v">user</span><span class="b1">)</span><span class="p">;</span></div>
<div class="cl" style="left:297.60px;top:545.10px">    <span class="b3">}</span> <span class="k">catch</span> <span class="b3">(</span><span class="v">error</span><span class="b3">)</span> <span class="b3">{</span></div>
<div class="cl" style="left:297.60px;top:557.16px">      <span class="k">throw</span> <span class="c2">new</span> <span class="t">Error</span><span class="b1">(</span><span class="s">`Failed to create user: </span><span class="c2">${</span><span class="v">error</span><span class="c2">}</span><span class="s">`</span><span class="b1">)</span><span class="p">;</span></div>
<div class="cl" style="left:297.60px;top:569.22px">    <span class="b3">}</span></div>
<div class="cl" style="left:297.60px;top:581.28px">  <span class="b2x">}</span></div>
<div class="cl" style="left:297.60px;top:593.34px"></div>
<div class="cl" style="left:297.60px;top:605.40px">  <span class="cm">/**</span></div>
<div class="cl" style="left:297.60px;top:617.46px">  <span class="cm"> * Finds a user by email address</span></div>
<div class="cl" style="left:297.60px;top:629.52px">  <span class="cm"> * </span><span class="c2">@param</span> <span class="v">email</span><span class="cm"> - User's email address</span></div>
<div class="cl" style="left:297.60px;top:641.58px">  <span class="cm"> * </span><span class="c2">@returns</span><span class="cm"> Promise&lt;User | null&gt; - User entity if found, null otherwise</span></div>
<div class="cl" style="left:297.60px;top:653.64px">  <span class="cm"> */</span></div>
<div class="cl" style="left:297.60px;top:665.70px">  <span class="c2">async</span> <span class="f">findUserByEmail</span><span class="b2">(</span><span class="v">email</span><span class="p">:</span> <span class="t">string</span><span class="b2">)</span><span class="p">:</span> <span class="t">Promise</span><span class="b2">&lt;</span><span class="t">User</span> <span class="p">|</span> <span class="c2">null</span><span class="b2">&gt;</span> <span class="b2">{</span></div>
<div class="cl" style="left:297.60px;top:677.76px">    <span class="k">try</span> <span class="b3">{</span></div>
<div class="cl" style="left:297.60px;top:689.82px">      <span class="k">return</span> <span class="k">await</span> <span class="c2">this</span><span class="p">.</span><span class="v">userRepository</span><span class="p">.</span><span class="f">findOne</span><span class="b1">(</span><span class="b2">{</span></div>
<div class="cl" style="left:297.60px;top:701.88px">        <span class="v">where</span><span class="p">:</span> <span class="b3">{</span> <span class="v">email</span><span class="p">:</span> <span class="v">email</span><span class="p">.</span><span class="f">toLowerCase</span><span class="b1">()</span><span class="p">.</span><span class="f">trim</span><span class="b1">()</span> <span class="b3">}</span><span class="p">,</span></div>
<div class="cl" style="left:297.60px;top:713.94px">      <span class="b2">}</span><span class="b1">)</span><span class="p">;</span></div>
<div class="cl" style="left:297.60px;top:726.00px">    <span class="b3">}</span> <span class="k">catch</span> <span class="b3">(</span><span class="v">error</span><span class="b3">)</span> <span class="b3">{</span></div>
<div class="cl" style="left:297.60px;top:738.06px">      <span class="k">throw</span> <span class="c2">new</span> <span class="t">Error</span><span class="b1">(</span><span class="s">`Failed to find user: </span><span class="c2">${</span><span class="v">error</span><span class="c2">}</span><span class="s">`</span><span class="b1">)</span><span class="p">;</span></div>
<div class="cl" style="left:297.60px;top:750.12px">    <span class="b3">}</span></div>
<div class="cl" style="left:297.60px;top:762.18px">  <span class="b2">}</span></div>
<div class="cl" style="left:297.60px;top:774.24px"><span class="b1">}</span></div>
<div class="cl" style="left:297.60px;top:786.30px"></div>
<div class="tl" style="left:1115.57px;top:27.50px">you're ready!</div>
<div class="tl" style="left:1101.10px;top:37.14px"></div>
<div class="tl" style="left:1101.10px;top:46.79px"><span class="pr">&gt; ready</span></div>
<div class="tl" style="left:1101.10px;top:56.43px"></div>
<div class="abs" style="left:1101.30px;top:68.68px;width:4.6px;height:4.6px;border-radius:50%;background:#f0f0f0"></div>
<div class="tl" style="left:1101.10px;top:66.08px">  Let me load Task 17 and execute it:</div>
<div class="tl" style="left:1101.10px;top:75.72px"></div>
<div class="abs" style="left:1101.30px;top:87.96px;width:4.6px;height:4.6px;border-radius:50%;background:#4eba65"></div>
<div class="tl" style="left:1101.10px;top:85.36px">  <span class="b">Bash</span>(claude-code-spec-workflow get-tasks signup 17 --mode single)</div>
<div class="abs" style="left:1114.2px;top:96.61px;width:4.6px;height:6.6px;border-left:0.9px solid #9a9a9a;border-bottom:0.9px solid #9a9a9a"></div>
<div class="tl" style="left:1101.10px;top:95.01px">    {</div>
<div class="tl" style="left:1101.10px;top:104.65px">      "id": "17",</div>
<div class="tl" style="left:1101.10px;top:114.30px">      "description": "Write integration test for signup error scenarios in test/auth</div>
<div class="tl" style="left:1101.10px;top:123.94px">    <span class="dm">… +11 lines (ctrl+o to expand)</span></div>
<div class="tl" style="left:1101.10px;top:133.58px"></div>
<div class="tl" style="left:1101.10px;top:143.23px"></div>
<div class="abs" style="left:1101.30px;top:155.47px;width:4.6px;height:4.6px;border-radius:50%;background:#4eba65"></div>
<div class="abs" style="left:1110.75px;top:152.87px;width:86.83px;height:9.5px;background:#e0962e"></div>
<div class="tl" style="left:1101.10px;top:152.87px">  <span class="hl">spec-task-executor</span>(Execute task 17 for signup)</div>
<div class="abs" style="left:1114.2px;top:164.12px;width:4.6px;height:6.6px;border-left:0.9px solid #9a9a9a;border-bottom:0.9px solid #9a9a9a"></div>
<div class="tl" style="left:1101.10px;top:162.52px">     Done (4 tool uses · 15.7k tokens · 29.4s)</div>
<div class="tl" style="left:1101.10px;top:172.16px"></div>
<div class="abs" style="left:1101.30px;top:184.40px;width:4.6px;height:4.6px;border-radius:50%;background:#f0f0f0"></div>
<div class="tl" style="left:1101.10px;top:181.80px">  Perfect! <span class="b">Task 17 has been marked as complete.</span></div>
<div class="tl" style="left:1101.10px;top:191.45px"></div>
<div class="tl" style="left:1101.10px;top:201.09px">  The integration tests for signup error scenarios have been successfully</div>
<div class="tl" style="left:1101.10px;top:210.74px">  implemented. I can see it's marked as complete <span class="lk">[x]</span> in the tasks.md file.</div>
<div class="tl" style="left:1101.10px;top:220.38px"></div>
<svg class="abs" style="left:1110.65px;top:229.62px" width="11" height="10" viewBox="0 0 11 10"><rect x="0.2" y="0" width="10.6" height="9.6" rx="2" fill="#35b535"/><path d="M3 5.2 L4.6 6.9 L8.4 1.6" stroke="#e8f8e8" stroke-width="1" fill="none"/></svg>
<div class="tl" style="left:1101.10px;top:230.02px">     <span class="b">Task 17 accomplished:</span></div>
<div class="tl" style="left:1101.10px;top:239.67px">  - Extended existing <span class="lk">test/auth.e2e-spec.ts</span> with error scenario tests</div>
<div class="tl" style="left:1101.10px;top:249.31px">  - Tested duplicate email returns HTTP 409 with proper conflict message</div>
<div class="tl" style="left:1101.10px;top:258.96px">  - Tested invalid email format returns HTTP 400 with validation error</div>
<div class="tl" style="left:1101.10px;top:268.60px">  - Tested short password returns HTTP 400 with validation message</div>
<div class="tl" style="left:1101.10px;top:278.24px">  - Verified end-to-end error handling with real HTTP requests</div>
<div class="tl" style="left:1101.10px;top:287.89px">  - All 5 E2E tests pass successfully</div>
<div class="tl" style="left:1101.10px;top:297.53px">  - Satisfies <span class="b">SIGNUP-REQ-001</span> (error scenarios) and <span class="b">SIGNUP-REQ-003</span> (error response</div>
<div class="tl" style="left:1101.10px;top:307.18px">  format)</div>
<div class="tl" style="left:1101.10px;top:316.82px"></div>
<div class="tl" style="left:1101.10px;top:326.46px">  The comprehensive end-to-end testing is now complete with both success and error</div>
<div class="tl" style="left:1101.10px;top:336.11px">  scenarios covered.</div>
<div class="tl" style="left:1101.10px;top:345.75px"></div>
<div class="tl" style="left:1101.10px;top:355.40px">  Ready to proceed to <span class="b">Task 18: Add DTO validation tests</span> when you're ready!</div>
<div class="tl" style="left:1101.10px;top:365.04px"></div>
<div class="tl" style="left:1101.10px;top:374.68px"><span class="pr">&gt; ready</span></div>
<div class="tl" style="left:1101.10px;top:384.33px"></div>
<div class="abs" style="left:1101.30px;top:396.57px;width:4.6px;height:4.6px;border-radius:50%;background:#f0f0f0"></div>
<div class="tl" style="left:1101.10px;top:393.97px">  Let me load Task 18 and execute it:</div>
<div class="tl" style="left:1101.10px;top:403.62px"></div>
<div class="abs" style="left:1101.30px;top:415.86px;width:4.6px;height:4.6px;border-radius:50%;background:#4eba65"></div>
<div class="tl" style="left:1101.10px;top:413.26px">  <span class="b">Bash</span>(claude-code-spec-workflow get-tasks signup 18 --mode single)</div>
<div class="abs" style="left:1114.2px;top:424.50px;width:4.6px;height:6.6px;border-left:0.9px solid #9a9a9a;border-bottom:0.9px solid #9a9a9a"></div>
<div class="tl" style="left:1101.10px;top:422.90px">     {</div>
<div class="tl" style="left:1101.10px;top:432.55px">       "id": "18",</div>
<div class="tl" style="left:1101.10px;top:442.19px">       "description": "Add DTO validation tests in src/auth/dto/signup.dto.spec.ts",</div>
<div class="tl" style="left:1101.10px;top:451.84px">     <span class="dm">… +10 lines (ctrl+o to expand)</span></div>
<div class="tl" style="left:1101.10px;top:461.48px"></div>
<div class="abs" style="left:1101.30px;top:473.72px;width:4.6px;height:4.6px;border-radius:50%;background:#4eba65"></div>
<div class="abs" style="left:1110.75px;top:471.12px;width:86.83px;height:9.5px;background:#e0962e"></div>
<div class="tl" style="left:1101.10px;top:471.12px">  <span class="hl">spec-task-executor</span>(Execute task 18 for signup)</div>
<div class="abs" style="left:1114.2px;top:482.37px;width:4.6px;height:6.6px;border-left:0.9px solid #9a9a9a;border-bottom:0.9px solid #9a9a9a"></div>
<div class="tl" style="left:1101.10px;top:480.77px">     Done (18 tool uses · 39.1k tokens · 3m 60s)</div>
<div class="tl" style="left:1101.10px;top:490.41px"></div>
<div class="abs" style="left:1101.30px;top:502.66px;width:4.6px;height:4.6px;border-radius:50%;background:#f0f0f0"></div>
<div class="tl" style="left:1101.10px;top:500.06px">  Perfect! <span class="b">Task 18 has been marked as complete.</span></div>
<div class="tl" style="left:1101.10px;top:509.70px"></div>
<div class="tl" style="left:1101.10px;top:519.34px">  The DTO validation tests have been successfully implemented with comprehensive</div>
<div class="tl" style="left:1101.10px;top:528.99px">  coverage. I can see it's marked as complete <span class="lk">[x]</span> in the tasks.md file.</div>
<div class="tl" style="left:1101.10px;top:538.63px"></div>
<svg class="abs" style="left:1110.65px;top:547.88px" width="11" height="10" viewBox="0 0 11 10"><rect x="0.2" y="0" width="10.6" height="9.6" rx="2" fill="#35b535"/><path d="M3 5.2 L4.6 6.9 L8.4 1.6" stroke="#e8f8e8" stroke-width="1" fill="none"/></svg>
<div class="tl" style="left:1101.10px;top:548.28px">     <span class="b">Task 18 accomplished:</span></div>
<div class="tl" style="left:1101.10px;top:557.92px">  - Created <span class="lk">src/auth/dto/signup.dto.spec.ts</span> with comprehensive DTO validation tests</div>
<div class="tl" style="left:1101.10px;top:567.56px">  - Tested email format validation with RFC 5322 compliance</div>
<div class="tl" style="left:1101.10px;top:577.21px">  - Tested password length requirements (minimum 8 characters)</div>
<div class="tl" style="left:1101.10px;top:586.85px">  - Verified validation error messages match requirements exactly</div>
<div class="tl" style="left:1101.10px;top:596.50px">  - Added 20 comprehensive test cases covering all validation scenarios</div>
<div class="tl" style="left:1101.10px;top:606.14px">  - Used class-validator testing patterns with <span class="lk">validate()</span> and <span class="lk">plainToInstance()</span></div>
<div class="tl" style="left:1101.10px;top:615.78px">  - All 71 tests in the project continue to pass</div>
<div class="tl" style="left:1101.10px;top:625.43px">  - Satisfies <span class="b">SIGNUP-REQ-001</span> (input validation) and <span class="b">SIGNUP-REQ-003</span> (error messages)</div>
<div class="tl" style="left:1101.10px;top:635.07px"></div>
<svg class="abs" style="left:1110.55px;top:644.12px" width="11" height="10" viewBox="0 0 11 10"><path d="M0.6 9.4 L3.2 2.6 L7.4 6.8 Z" fill="#f2b23a"/><path d="M1.4 7.3 L2.3 5.0 L5.0 7.7 L2.7 8.6 Z" fill="#e0803a"/><path d="M5.2 1.2 q1.2 1.3 0.2 2.8 M7.4 3.6 q1.2 -0.6 2.2 0.4" stroke="#e44e8b" stroke-width="0.8" fill="none"/><circle cx="8.2" cy="1.4" r="0.7" fill="#4fb5e6"/><circle cx="6.8" cy="0.8" r="0.5" fill="#ffd23f"/><circle cx="9.6" cy="6" r="0.6" fill="#4f8ae6"/></svg>
<div class="tl" style="left:1101.10px;top:644.72px">     <span class="b">All 18 tasks have been completed successfully!</span></div>
<div class="tl" style="left:1101.10px;top:654.36px"></div>
<div class="tl" style="left:1101.10px;top:664.00px">  The signup API implementation is now complete with:</div>
<svg class="abs" style="left:1120.30px;top:673.25px" width="11" height="10" viewBox="0 0 11 10"><rect x="0.2" y="0" width="10.6" height="9.6" rx="2" fill="#35b535"/><path d="M3 5.2 L4.6 6.9 L8.4 1.6" stroke="#e8f8e8" stroke-width="1" fill="none"/></svg>
<div class="tl" style="left:1101.10px;top:673.65px">  -    Full authentication functionality (signup with JWT)</div>
<svg class="abs" style="left:1120.30px;top:682.89px" width="11" height="10" viewBox="0 0 11 10"><rect x="0.2" y="0" width="10.6" height="9.6" rx="2" fill="#35b535"/><path d="M3 5.2 L4.6 6.9 L8.4 1.6" stroke="#e8f8e8" stroke-width="1" fill="none"/></svg>
<div class="tl" style="left:1101.10px;top:683.29px">  -    Complete database integration with TypeORM and SQLite</div>
<svg class="abs" style="left:1120.30px;top:692.54px" width="11" height="10" viewBox="0 0 11 10"><rect x="0.2" y="0" width="10.6" height="9.6" rx="2" fill="#35b535"/><path d="M3 5.2 L4.6 6.9 L8.4 1.6" stroke="#e8f8e8" stroke-width="1" fill="none"/></svg>
<div class="tl" style="left:1101.10px;top:692.94px">  -    Comprehensive validation and error handling</div>
<svg class="abs" style="left:1120.30px;top:702.18px" width="11" height="10" viewBox="0 0 11 10"><rect x="0.2" y="0" width="10.6" height="9.6" rx="2" fill="#35b535"/><path d="M3 5.2 L4.6 6.9 L8.4 1.6" stroke="#e8f8e8" stroke-width="1" fill="none"/></svg>
<div class="tl" style="left:1101.10px;top:702.58px">  -    Extensive testing coverage (unit, integration, E2E, DTO)</div>
<svg class="abs" style="left:1120.30px;top:711.82px" width="11" height="10" viewBox="0 0 11 10"><rect x="0.2" y="0" width="10.6" height="9.6" rx="2" fill="#35b535"/><path d="M3 5.2 L4.6 6.9 L8.4 1.6" stroke="#e8f8e8" stroke-width="1" fill="none"/></svg>
<div class="tl" style="left:1101.10px;top:712.22px">  -    All requirements (SIGNUP-REQ-001, SIGNUP-REQ-002, SIGNUP-REQ-003) satisfied</div>
<div class="tl" style="left:1101.10px;top:721.87px"></div>
<div class="tl" style="left:1101.10px;top:731.51px">  The signup feature is ready for production use!</div>
<div class="abs" style="left:120.5px;top:57.3px;width:236.5px;height:16.3px;background:#202020;border:1px solid #454545;border-radius:2.5px;box-shadow:0 2px 5px rgba(0,0,0,0.55)"></div><div class="abs" style="left:127px;top:57.5px;height:15.8px;line-height:15.8px;font-size:8.5px;white-space:pre;color:#cccccc;-webkit-text-stroke:0.15px #cccccc">~/Cpn_Projects/demo/.claude • Contains emphasized items</div>
</body></html>
